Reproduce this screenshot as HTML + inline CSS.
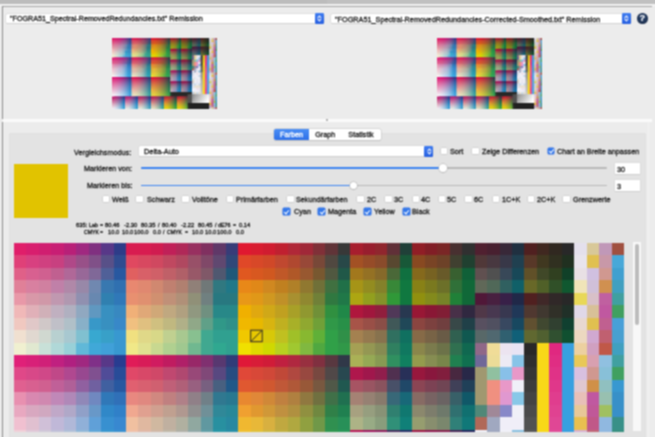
<!DOCTYPE html><html><head><meta charset="utf-8"><style>
*{margin:0;padding:0;box-sizing:border-box}
html,body{width:655px;height:437px;overflow:hidden;background:#ececec;-webkit-font-smoothing:antialiased;font-family:"Liberation Sans",sans-serif;color:#1c1c1c}
.a{position:absolute}
.t{position:absolute;white-space:nowrap;font-size:7.25px;line-height:9px;-webkit-text-stroke:0.3px currentColor;will-change:transform}
.pop{position:absolute;background:#fff;border-radius:1.5px;box-shadow:0 0 0 0.5px #d4d4d4,0 0.5px 0.8px rgba(0,0,0,.12)}
.step{position:absolute;background:linear-gradient(#3f7cf0,#2860e0);border-radius:1.2px}
.step:before,.step:after{content:"";position:absolute;left:50%;width:1.8px;height:1.8px;border-left:0.9px solid #fff;border-top:0.9px solid #fff;margin-left:-1.1px}
.step:before{top:3.4px;transform:rotate(45deg)}
.step:after{bottom:3.4px;transform:rotate(-135deg)}
.cb{position:absolute;width:6.6px;height:6.6px;background:#fff;border-radius:1px;box-shadow:0 0 0 0.5px #c4c4c4,0 0.3px 0.6px rgba(0,0,0,.12)}
.cb.on{background:#3478ea;box-shadow:0 0 0 0.5px #2c6ae0}
.cb.on:after{content:"";position:absolute;left:2.3px;top:0.6px;width:2px;height:4px;border-right:1.2px solid #fff;border-bottom:1.2px solid #fff;transform:rotate(40deg)}
.grid{position:absolute;display:grid}
.grid i{display:block}
</style></head><body><svg width="0" height="0" style="position:absolute"><filter id="bl" x="0" y="0" width="655" height="437" filterUnits="userSpaceOnUse" color-interpolation-filters="sRGB"><feConvolveMatrix order="3" kernelMatrix="1 2 1 2 4 2 1 2 1" divisor="16" edgeMode="duplicate" preserveAlpha="true"/></filter></svg><div id="w" style="position:absolute;left:0;top:0;width:655px;height:437px;overflow:hidden;background:#ececec;filter:url(#bl)">
<div class="a" style="left:0;top:0;width:655px;height:4px;background:#bcbcbc"></div><div class="a" style="left:327px;top:0;width:328px;height:4px;background:#c0c0c0"></div><div class="a" style="left:0;top:4px;width:655px;height:2.2px;background:#f2f2f2"></div><div class="a" style="left:2px;top:6.2px;width:650px;height:1.2px;background:#a2a2a2"></div><div class="a" style="left:1.5px;top:6px;width:1px;height:113px;background:#8a8a8a"></div><div class="a" style="left:1.5px;top:122px;width:1px;height:315px;background:#8a8a8a"></div><div class="a" style="left:648px;top:122px;width:1px;height:315px;background:#f2f2f2"></div><div class="pop" style="left:6px;top:13.5px;width:318px;height:9.2px"></div><div class="step" style="left:315px;top:12.5px;width:9px;height:11.5px"></div><div class="t" style="left:10px;top:14.7px;font-size:7.18px">"FOGRA51_Spectral-RemovedRedundancies.txt" Remission</div><div class="pop" style="left:330.5px;top:13.5px;width:300px;height:9.2px"></div><div class="step" style="left:621.5px;top:12.5px;width:9px;height:11.5px"></div><div class="t" style="left:334.5px;top:14.7px;font-size:7.28px">"FOGRA51_Spectral-RemovedRedundancies-Corrected-Smoothed.txt" Remission</div><div class="a" style="left:637.2px;top:13px;width:10.6px;height:10.6px;border-radius:50%;background:radial-gradient(circle at 50% 40%,#2c4670,#15253f)"></div><div class="t" style="left:637.2px;top:13.2px;width:10.6px;text-align:center;color:#fff;font-weight:bold;font-size:9px;line-height:10.8px;-webkit-text-stroke:0.2px #fff">?</div><svg class="a" style="left:111.6px;top:37.8px" width="105.84" height="71.50" viewBox="0 0 49 33" preserveAspectRatio="none"><g id="th"><rect x="0" y="0" width="2" height="2" fill="#e01e6a"/><rect x="1" y="0" width="2" height="2" fill="#d81e6e"/><rect x="2" y="0" width="2" height="2" fill="#d01e70"/><rect x="3" y="0" width="2" height="2" fill="#c81e74"/><rect x="4" y="0" width="2" height="2" fill="#b82078"/><rect x="5" y="0" width="2" height="2" fill="#a02880"/><rect x="6" y="0" width="2" height="2" fill="#803080"/><rect x="7" y="0" width="2" height="2" fill="#583888"/><rect x="8" y="0" width="2" height="2" fill="#2e3c88"/><rect x="9" y="0" width="2" height="2" fill="#d81c50"/><rect x="10" y="0" width="2" height="2" fill="#d81c50"/><rect x="11" y="0" width="2" height="2" fill="#d01c50"/><rect x="12" y="0" width="2" height="2" fill="#c02058"/><rect x="13" y="0" width="2" height="2" fill="#b02858"/><rect x="14" y="0" width="2" height="2" fill="#983060"/><rect x="15" y="0" width="2" height="2" fill="#803060"/><rect x="16" y="0" width="2" height="2" fill="#603868"/><rect x="17" y="0" width="2" height="2" fill="#383c78"/><rect x="18" y="0" width="2" height="2" fill="#e01830"/><rect x="19" y="0" width="2" height="2" fill="#d81c30"/><rect x="20" y="0" width="2" height="2" fill="#d01c30"/><rect x="21" y="0" width="2" height="2" fill="#c02030"/><rect x="22" y="0" width="2" height="2" fill="#b02838"/><rect x="23" y="0" width="2" height="2" fill="#a02838"/><rect x="24" y="0" width="2" height="2" fill="#803038"/><rect x="25" y="0" width="2" height="2" fill="#603438"/><rect x="26" y="0" width="2" height="2" fill="#383838"/><rect x="27" y="0" width="2" height="2" fill="#a71e2e"/><rect x="28" y="0" width="2" height="2" fill="#981e2e"/><rect x="29" y="0" width="2" height="2" fill="#90262e"/><rect x="30" y="0" width="2" height="2" fill="#603038"/><rect x="31" y="0" width="2" height="2" fill="#204038"/><rect x="32" y="0" width="2" height="2" fill="#901e26"/><rect x="33" y="0" width="2" height="2" fill="#811e26"/><rect x="34" y="0" width="2" height="2" fill="#7a2626"/><rect x="35" y="0" width="2" height="2" fill="#483030"/><rect x="36" y="0" width="2" height="2" fill="#303030"/><rect x="37" y="0" width="2" height="2" fill="#502030"/><rect x="38" y="0" width="2" height="2" fill="#482030"/><rect x="39" y="0" width="2" height="2" fill="#382838"/><rect x="40" y="0" width="2" height="2" fill="#203040"/><rect x="41" y="0" width="2" height="2" fill="#502020"/><rect x="42" y="0" width="2" height="2" fill="#402820"/><rect x="43" y="0" width="2" height="2" fill="#302820"/><rect x="44" y="0" width="2" height="2" fill="#282828"/><rect x="45" y="0" width="2" height="2" fill="#e4e0ec"/><rect x="46" y="0" width="2" height="2" fill="#d8c898"/><rect x="47" y="0" width="2" height="2" fill="#c098b8"/><rect x="48" y="0" width="2" height="2" fill="#a05040"/><rect x="0" y="1" width="2" height="2" fill="#e04078"/><rect x="1" y="1" width="2" height="2" fill="#d84080"/><rect x="2" y="1" width="2" height="2" fill="#d04080"/><rect x="3" y="1" width="2" height="2" fill="#c84080"/><rect x="4" y="1" width="2" height="2" fill="#b04888"/><rect x="5" y="1" width="2" height="2" fill="#985088"/><rect x="6" y="1" width="2" height="2" fill="#805088"/><rect x="7" y="1" width="2" height="2" fill="#585088"/><rect x="8" y="1" width="2" height="2" fill="#304c90"/><rect x="9" y="1" width="2" height="2" fill="#e04860"/><rect x="10" y="1" width="2" height="2" fill="#d84860"/><rect x="11" y="1" width="2" height="2" fill="#d04860"/><rect x="12" y="1" width="2" height="2" fill="#c04860"/><rect x="13" y="1" width="2" height="2" fill="#b04860"/><rect x="14" y="1" width="2" height="2" fill="#985068"/><rect x="15" y="1" width="2" height="2" fill="#804868"/><rect x="16" y="1" width="2" height="2" fill="#604870"/><rect x="17" y="1" width="2" height="2" fill="#304878"/><rect x="18" y="1" width="2" height="2" fill="#e04828"/><rect x="19" y="1" width="2" height="2" fill="#d84828"/><rect x="20" y="1" width="2" height="2" fill="#d04828"/><rect x="21" y="1" width="2" height="2" fill="#c04830"/><rect x="22" y="1" width="2" height="2" fill="#b04830"/><rect x="23" y="1" width="2" height="2" fill="#984838"/><rect x="24" y="1" width="2" height="2" fill="#784838"/><rect x="25" y="1" width="2" height="2" fill="#504840"/><rect x="26" y="1" width="2" height="2" fill="#284848"/><rect x="27" y="1" width="2" height="2" fill="#a35124"/><rect x="28" y="1" width="2" height="2" fill="#964c28"/><rect x="29" y="1" width="2" height="2" fill="#8a4b2b"/><rect x="30" y="1" width="2" height="2" fill="#584830"/><rect x="31" y="1" width="2" height="2" fill="#185838"/><rect x="32" y="1" width="2" height="2" fill="#884921"/><rect x="33" y="1" width="2" height="2" fill="#794425"/><rect x="34" y="1" width="2" height="2" fill="#6d4228"/><rect x="35" y="1" width="2" height="2" fill="#404030"/><rect x="36" y="1" width="2" height="2" fill="#204030"/><rect x="37" y="1" width="2" height="2" fill="#503838"/><rect x="38" y="1" width="2" height="2" fill="#483840"/><rect x="39" y="1" width="2" height="2" fill="#383848"/><rect x="40" y="1" width="2" height="2" fill="#204050"/><rect x="41" y="1" width="2" height="2" fill="#583828"/><rect x="42" y="1" width="2" height="2" fill="#403820"/><rect x="43" y="1" width="2" height="2" fill="#303020"/><rect x="44" y="1" width="2" height="2" fill="#203020"/><rect x="45" y="1" width="2" height="2" fill="#e8e4ec"/><rect x="46" y="1" width="2" height="2" fill="#e0c050"/><rect x="47" y="1" width="2" height="2" fill="#c898a8"/><rect x="48" y="1" width="2" height="2" fill="#48a8d8"/><rect x="0" y="2" width="2" height="2" fill="#e06088"/><rect x="1" y="2" width="2" height="2" fill="#d86090"/><rect x="2" y="2" width="2" height="2" fill="#d06090"/><rect x="3" y="2" width="2" height="2" fill="#c06090"/><rect x="4" y="2" width="2" height="2" fill="#b06898"/><rect x="5" y="2" width="2" height="2" fill="#986898"/><rect x="6" y="2" width="2" height="2" fill="#806898"/><rect x="7" y="2" width="2" height="2" fill="#506098"/><rect x="8" y="2" width="2" height="2" fill="#2858a0"/><rect x="9" y="2" width="2" height="2" fill="#e06060"/><rect x="10" y="2" width="2" height="2" fill="#d86068"/><rect x="11" y="2" width="2" height="2" fill="#d06068"/><rect x="12" y="2" width="2" height="2" fill="#c06068"/><rect x="13" y="2" width="2" height="2" fill="#b06068"/><rect x="14" y="2" width="2" height="2" fill="#985868"/><rect x="15" y="2" width="2" height="2" fill="#805868"/><rect x="16" y="2" width="2" height="2" fill="#505870"/><rect x="17" y="2" width="2" height="2" fill="#205878"/><rect x="18" y="2" width="2" height="2" fill="#e05820"/><rect x="19" y="2" width="2" height="2" fill="#d85820"/><rect x="20" y="2" width="2" height="2" fill="#d05820"/><rect x="21" y="2" width="2" height="2" fill="#c05828"/><rect x="22" y="2" width="2" height="2" fill="#b05828"/><rect x="23" y="2" width="2" height="2" fill="#985830"/><rect x="24" y="2" width="2" height="2" fill="#785830"/><rect x="25" y="2" width="2" height="2" fill="#505840"/><rect x="26" y="2" width="2" height="2" fill="#205848"/><rect x="27" y="2" width="2" height="2" fill="#a2781d"/><rect x="28" y="2" width="2" height="2" fill="#947124"/><rect x="29" y="2" width="2" height="2" fill="#86692a"/><rect x="30" y="2" width="2" height="2" fill="#4a6838"/><rect x="31" y="2" width="2" height="2" fill="#107040"/><rect x="32" y="2" width="2" height="2" fill="#85691c"/><rect x="33" y="2" width="2" height="2" fill="#776222"/><rect x="34" y="2" width="2" height="2" fill="#685a29"/><rect x="35" y="2" width="2" height="2" fill="#386030"/><rect x="36" y="2" width="2" height="2" fill="#106038"/><rect x="37" y="2" width="2" height="2" fill="#605050"/><rect x="38" y="2" width="2" height="2" fill="#505050"/><rect x="39" y="2" width="2" height="2" fill="#384858"/><rect x="40" y="2" width="2" height="2" fill="#184858"/><rect x="41" y="2" width="2" height="2" fill="#605028"/><rect x="42" y="2" width="2" height="2" fill="#404828"/><rect x="43" y="2" width="2" height="2" fill="#304020"/><rect x="44" y="2" width="2" height="2" fill="#104028"/><rect x="45" y="2" width="2" height="2" fill="#e8e0e4"/><rect x="46" y="2" width="2" height="2" fill="#d0c0e0"/><rect x="47" y="2" width="2" height="2" fill="#d09890"/><rect x="48" y="2" width="2" height="2" fill="#40a0d0"/><rect x="0" y="3" width="2" height="2" fill="#e08098"/><rect x="1" y="3" width="2" height="2" fill="#d880a0"/><rect x="2" y="3" width="2" height="2" fill="#d080a0"/><rect x="3" y="3" width="2" height="2" fill="#c080a8"/><rect x="4" y="3" width="2" height="2" fill="#b088a8"/><rect x="5" y="3" width="2" height="2" fill="#9888a8"/><rect x="6" y="3" width="2" height="2" fill="#7088b0"/><rect x="7" y="3" width="2" height="2" fill="#3878b0"/><rect x="8" y="3" width="2" height="2" fill="#3070b0"/><rect x="9" y="3" width="2" height="2" fill="#e88870"/><rect x="10" y="3" width="2" height="2" fill="#e08870"/><rect x="11" y="3" width="2" height="2" fill="#d08870"/><rect x="12" y="3" width="2" height="2" fill="#c08070"/><rect x="13" y="3" width="2" height="2" fill="#b08070"/><rect x="14" y="3" width="2" height="2" fill="#908078"/><rect x="15" y="3" width="2" height="2" fill="#707878"/><rect x="16" y="3" width="2" height="2" fill="#307880"/><rect x="17" y="3" width="2" height="2" fill="#207888"/><rect x="18" y="3" width="2" height="2" fill="#e88818"/><rect x="19" y="3" width="2" height="2" fill="#e08818"/><rect x="20" y="3" width="2" height="2" fill="#d08820"/><rect x="21" y="3" width="2" height="2" fill="#c08020"/><rect x="22" y="3" width="2" height="2" fill="#b08028"/><rect x="23" y="3" width="2" height="2" fill="#907830"/><rect x="24" y="3" width="2" height="2" fill="#707038"/><rect x="25" y="3" width="2" height="2" fill="#407040"/><rect x="26" y="3" width="2" height="2" fill="#207048"/><rect x="27" y="3" width="2" height="2" fill="#a69417"/><rect x="28" y="3" width="2" height="2" fill="#938c20"/><rect x="29" y="3" width="2" height="2" fill="#84812a"/><rect x="30" y="3" width="2" height="2" fill="#388838"/><rect x="31" y="3" width="2" height="2" fill="#107840"/><rect x="32" y="3" width="2" height="2" fill="#888116"/><rect x="33" y="3" width="2" height="2" fill="#7a791f"/><rect x="34" y="3" width="2" height="2" fill="#6c7029"/><rect x="35" y="3" width="2" height="2" fill="#307038"/><rect x="36" y="3" width="2" height="2" fill="#106838"/><rect x="37" y="3" width="2" height="2" fill="#606858"/><rect x="38" y="3" width="2" height="2" fill="#506858"/><rect x="39" y="3" width="2" height="2" fill="#306060"/><rect x="40" y="3" width="2" height="2" fill="#106068"/><rect x="41" y="3" width="2" height="2" fill="#686828"/><rect x="42" y="3" width="2" height="2" fill="#506028"/><rect x="43" y="3" width="2" height="2" fill="#305028"/><rect x="44" y="3" width="2" height="2" fill="#105830"/><rect x="45" y="3" width="2" height="2" fill="#f0e4b8"/><rect x="46" y="3" width="2" height="2" fill="#d0c0d8"/><rect x="47" y="3" width="2" height="2" fill="#d09050"/><rect x="48" y="3" width="2" height="2" fill="#40a0c0"/><rect x="0" y="4" width="2" height="2" fill="#e898a8"/><rect x="1" y="4" width="2" height="2" fill="#d898a8"/><rect x="2" y="4" width="2" height="2" fill="#d098a8"/><rect x="3" y="4" width="2" height="2" fill="#c098b0"/><rect x="4" y="4" width="2" height="2" fill="#b098b0"/><rect x="5" y="4" width="2" height="2" fill="#9090b0"/><rect x="6" y="4" width="2" height="2" fill="#6888b0"/><rect x="7" y="4" width="2" height="2" fill="#3080b0"/><rect x="8" y="4" width="2" height="2" fill="#3078b8"/><rect x="9" y="4" width="2" height="2" fill="#e89070"/><rect x="10" y="4" width="2" height="2" fill="#e09070"/><rect x="11" y="4" width="2" height="2" fill="#d09070"/><rect x="12" y="4" width="2" height="2" fill="#c09078"/><rect x="13" y="4" width="2" height="2" fill="#b09078"/><rect x="14" y="4" width="2" height="2" fill="#909078"/><rect x="15" y="4" width="2" height="2" fill="#708080"/><rect x="16" y="4" width="2" height="2" fill="#287880"/><rect x="17" y="4" width="2" height="2" fill="#287880"/><rect x="18" y="4" width="2" height="2" fill="#e89818"/><rect x="19" y="4" width="2" height="2" fill="#e09818"/><rect x="20" y="4" width="2" height="2" fill="#d09820"/><rect x="21" y="4" width="2" height="2" fill="#c09028"/><rect x="22" y="4" width="2" height="2" fill="#a89030"/><rect x="23" y="4" width="2" height="2" fill="#908830"/><rect x="24" y="4" width="2" height="2" fill="#708038"/><rect x="25" y="4" width="2" height="2" fill="#307840"/><rect x="26" y="4" width="2" height="2" fill="#207848"/><rect x="27" y="4" width="2" height="2" fill="#ada612"/><rect x="28" y="4" width="2" height="2" fill="#929f1e"/><rect x="29" y="4" width="2" height="2" fill="#84912a"/><rect x="30" y="4" width="2" height="2" fill="#309838"/><rect x="31" y="4" width="2" height="2" fill="#107840"/><rect x="32" y="4" width="2" height="2" fill="#90900f"/><rect x="33" y="4" width="2" height="2" fill="#838a1c"/><rect x="34" y="4" width="2" height="2" fill="#768328"/><rect x="35" y="4" width="2" height="2" fill="#208038"/><rect x="36" y="4" width="2" height="2" fill="#106838"/><rect x="37" y="4" width="2" height="2" fill="#501838"/><rect x="38" y="4" width="2" height="2" fill="#482040"/><rect x="39" y="4" width="2" height="2" fill="#382048"/><rect x="40" y="4" width="2" height="2" fill="#202848"/><rect x="41" y="4" width="2" height="2" fill="#502020"/><rect x="42" y="4" width="2" height="2" fill="#402828"/><rect x="43" y="4" width="2" height="2" fill="#302828"/><rect x="44" y="4" width="2" height="2" fill="#282828"/><rect x="45" y="4" width="2" height="2" fill="#e8d858"/><rect x="46" y="4" width="2" height="2" fill="#d8c0c8"/><rect x="47" y="4" width="2" height="2" fill="#c060a0"/><rect x="48" y="4" width="2" height="2" fill="#40a0a0"/><rect x="0" y="5" width="2" height="2" fill="#f0b8b8"/><rect x="1" y="5" width="2" height="2" fill="#e0b0b8"/><rect x="2" y="5" width="2" height="2" fill="#d0b0b8"/><rect x="3" y="5" width="2" height="2" fill="#c0b0c0"/><rect x="4" y="5" width="2" height="2" fill="#b0b0c0"/><rect x="5" y="5" width="2" height="2" fill="#90a8c0"/><rect x="6" y="5" width="2" height="2" fill="#6098c0"/><rect x="7" y="5" width="2" height="2" fill="#3890c0"/><rect x="8" y="5" width="2" height="2" fill="#3888c0"/><rect x="9" y="5" width="2" height="2" fill="#f0b078"/><rect x="10" y="5" width="2" height="2" fill="#e0a878"/><rect x="11" y="5" width="2" height="2" fill="#d0a878"/><rect x="12" y="5" width="2" height="2" fill="#c0a880"/><rect x="13" y="5" width="2" height="2" fill="#b0a080"/><rect x="14" y="5" width="2" height="2" fill="#909880"/><rect x="15" y="5" width="2" height="2" fill="#709080"/><rect x="16" y="5" width="2" height="2" fill="#288888"/><rect x="17" y="5" width="2" height="2" fill="#288888"/><rect x="18" y="5" width="2" height="2" fill="#f0b000"/><rect x="19" y="5" width="2" height="2" fill="#e0a810"/><rect x="20" y="5" width="2" height="2" fill="#d0a818"/><rect x="21" y="5" width="2" height="2" fill="#c0a020"/><rect x="22" y="5" width="2" height="2" fill="#a8a028"/><rect x="23" y="5" width="2" height="2" fill="#909830"/><rect x="24" y="5" width="2" height="2" fill="#709038"/><rect x="25" y="5" width="2" height="2" fill="#309040"/><rect x="26" y="5" width="2" height="2" fill="#208848"/><rect x="27" y="5" width="2" height="2" fill="#af173d"/><rect x="28" y="5" width="2" height="2" fill="#a0173d"/><rect x="29" y="5" width="2" height="2" fill="#901e3d"/><rect x="30" y="5" width="2" height="2" fill="#503858"/><rect x="31" y="5" width="2" height="2" fill="#283850"/><rect x="32" y="5" width="2" height="2" fill="#981735"/><rect x="33" y="5" width="2" height="2" fill="#891735"/><rect x="34" y="5" width="2" height="2" fill="#811e35"/><rect x="35" y="5" width="2" height="2" fill="#483048"/><rect x="36" y="5" width="2" height="2" fill="#302840"/><rect x="37" y="5" width="2" height="2" fill="#503848"/><rect x="38" y="5" width="2" height="2" fill="#483850"/><rect x="39" y="5" width="2" height="2" fill="#383850"/><rect x="40" y="5" width="2" height="2" fill="#203858"/><rect x="41" y="5" width="2" height="2" fill="#503830"/><rect x="42" y="5" width="2" height="2" fill="#403830"/><rect x="43" y="5" width="2" height="2" fill="#303028"/><rect x="44" y="5" width="2" height="2" fill="#203028"/><rect x="45" y="5" width="2" height="2" fill="#e0d8e8"/><rect x="46" y="5" width="2" height="2" fill="#d8c098"/><rect x="47" y="5" width="2" height="2" fill="#c058a0"/><rect x="48" y="5" width="2" height="2" fill="#40a060"/><rect x="0" y="6" width="2" height="2" fill="#f0c8c0"/><rect x="1" y="6" width="2" height="2" fill="#e0c8c8"/><rect x="2" y="6" width="2" height="2" fill="#d0c8c8"/><rect x="3" y="6" width="2" height="2" fill="#c0c0c8"/><rect x="4" y="6" width="2" height="2" fill="#b0c0c8"/><rect x="5" y="6" width="2" height="2" fill="#88b0c8"/><rect x="6" y="6" width="2" height="2" fill="#3898c8"/><rect x="7" y="6" width="2" height="2" fill="#3890c0"/><rect x="8" y="6" width="2" height="2" fill="#3888c8"/><rect x="9" y="6" width="2" height="2" fill="#f0c080"/><rect x="10" y="6" width="2" height="2" fill="#e0c080"/><rect x="11" y="6" width="2" height="2" fill="#d0c080"/><rect x="12" y="6" width="2" height="2" fill="#c0b880"/><rect x="13" y="6" width="2" height="2" fill="#b0b088"/><rect x="14" y="6" width="2" height="2" fill="#90a888"/><rect x="15" y="6" width="2" height="2" fill="#60a088"/><rect x="16" y="6" width="2" height="2" fill="#309888"/><rect x="17" y="6" width="2" height="2" fill="#309088"/><rect x="18" y="6" width="2" height="2" fill="#f0b800"/><rect x="19" y="6" width="2" height="2" fill="#e8b800"/><rect x="20" y="6" width="2" height="2" fill="#d8b410"/><rect x="21" y="6" width="2" height="2" fill="#c0b020"/><rect x="22" y="6" width="2" height="2" fill="#a8b028"/><rect x="23" y="6" width="2" height="2" fill="#90a830"/><rect x="24" y="6" width="2" height="2" fill="#70a038"/><rect x="25" y="6" width="2" height="2" fill="#309848"/><rect x="26" y="6" width="2" height="2" fill="#289048"/><rect x="27" y="6" width="2" height="2" fill="#a75448"/><rect x="28" y="6" width="2" height="2" fill="#994f47"/><rect x="29" y="6" width="2" height="2" fill="#8a4e47"/><rect x="30" y="6" width="2" height="2" fill="#405858"/><rect x="31" y="6" width="2" height="2" fill="#204858"/><rect x="32" y="6" width="2" height="2" fill="#8b4540"/><rect x="33" y="6" width="2" height="2" fill="#7c413f"/><rect x="34" y="6" width="2" height="2" fill="#703f3f"/><rect x="35" y="6" width="2" height="2" fill="#384848"/><rect x="36" y="6" width="2" height="2" fill="#204048"/><rect x="37" y="6" width="2" height="2" fill="#585060"/><rect x="38" y="6" width="2" height="2" fill="#505060"/><rect x="39" y="6" width="2" height="2" fill="#384860"/><rect x="40" y="6" width="2" height="2" fill="#184860"/><rect x="41" y="6" width="2" height="2" fill="#605030"/><rect x="42" y="6" width="2" height="2" fill="#404830"/><rect x="43" y="6" width="2" height="2" fill="#304030"/><rect x="44" y="6" width="2" height="2" fill="#104030"/><rect x="45" y="6" width="2" height="2" fill="#e8d8d0"/><rect x="46" y="6" width="2" height="2" fill="#e0c050"/><rect x="47" y="6" width="2" height="2" fill="#c06090"/><rect x="48" y="6" width="2" height="2" fill="#48a0d8"/><rect x="0" y="7" width="2" height="2" fill="#f0e0d0"/><rect x="1" y="7" width="2" height="2" fill="#e0d8d0"/><rect x="2" y="7" width="2" height="2" fill="#d0d8d0"/><rect x="3" y="7" width="2" height="2" fill="#b8d0d0"/><rect x="4" y="7" width="2" height="2" fill="#a8c8d0"/><rect x="5" y="7" width="2" height="2" fill="#80c0d0"/><rect x="6" y="7" width="2" height="2" fill="#38a8d0"/><rect x="7" y="7" width="2" height="2" fill="#38a0c8"/><rect x="8" y="7" width="2" height="2" fill="#3898d0"/><rect x="9" y="7" width="2" height="2" fill="#f0e080"/><rect x="10" y="7" width="2" height="2" fill="#e0d888"/><rect x="11" y="7" width="2" height="2" fill="#d8d888"/><rect x="12" y="7" width="2" height="2" fill="#c0d090"/><rect x="13" y="7" width="2" height="2" fill="#a8c890"/><rect x="14" y="7" width="2" height="2" fill="#88c090"/><rect x="15" y="7" width="2" height="2" fill="#40a890"/><rect x="16" y="7" width="2" height="2" fill="#30a090"/><rect x="17" y="7" width="2" height="2" fill="#30a090"/><rect x="18" y="7" width="2" height="2" fill="#f0c800"/><rect x="19" y="7" width="2" height="2" fill="#e8c800"/><rect x="20" y="7" width="2" height="2" fill="#d8c808"/><rect x="21" y="7" width="2" height="2" fill="#c0c020"/><rect x="22" y="7" width="2" height="2" fill="#a0c028"/><rect x="23" y="7" width="2" height="2" fill="#88b830"/><rect x="24" y="7" width="2" height="2" fill="#60b038"/><rect x="25" y="7" width="2" height="2" fill="#30a048"/><rect x="26" y="7" width="2" height="2" fill="#309048"/><rect x="27" y="7" width="2" height="2" fill="#a48150"/><rect x="28" y="7" width="2" height="2" fill="#95794f"/><rect x="29" y="7" width="2" height="2" fill="#87724e"/><rect x="30" y="7" width="2" height="2" fill="#307060"/><rect x="31" y="7" width="2" height="2" fill="#107060"/><rect x="32" y="7" width="2" height="2" fill="#866a47"/><rect x="33" y="7" width="2" height="2" fill="#786346"/><rect x="34" y="7" width="2" height="2" fill="#695b46"/><rect x="35" y="7" width="2" height="2" fill="#306050"/><rect x="36" y="7" width="2" height="2" fill="#105850"/><rect x="37" y="7" width="2" height="2" fill="#586868"/><rect x="38" y="7" width="2" height="2" fill="#506870"/><rect x="39" y="7" width="2" height="2" fill="#306070"/><rect x="40" y="7" width="2" height="2" fill="#106078"/><rect x="41" y="7" width="2" height="2" fill="#606830"/><rect x="42" y="7" width="2" height="2" fill="#506030"/><rect x="43" y="7" width="2" height="2" fill="#305030"/><rect x="44" y="7" width="2" height="2" fill="#105030"/><rect x="45" y="7" width="2" height="2" fill="#ecd8c0"/><rect x="46" y="7" width="2" height="2" fill="#d0a8d0"/><rect x="47" y="7" width="2" height="2" fill="#c06070"/><rect x="48" y="7" width="2" height="2" fill="#48a0d0"/><rect x="0" y="8" width="2" height="2" fill="#f0f0d0"/><rect x="1" y="8" width="2" height="2" fill="#e0e8d0"/><rect x="2" y="8" width="2" height="2" fill="#c8e0d8"/><rect x="3" y="8" width="2" height="2" fill="#b0d8d8"/><rect x="4" y="8" width="2" height="2" fill="#98d0d8"/><rect x="5" y="8" width="2" height="2" fill="#60b8d8"/><rect x="6" y="8" width="2" height="2" fill="#40a8d8"/><rect x="7" y="8" width="2" height="2" fill="#40a0d8"/><rect x="8" y="8" width="2" height="2" fill="#3898d0"/><rect x="9" y="8" width="2" height="2" fill="#f0e888"/><rect x="10" y="8" width="2" height="2" fill="#e0e090"/><rect x="11" y="8" width="2" height="2" fill="#c8d890"/><rect x="12" y="8" width="2" height="2" fill="#b0d090"/><rect x="13" y="8" width="2" height="2" fill="#a0c890"/><rect x="14" y="8" width="2" height="2" fill="#70b890"/><rect x="15" y="8" width="2" height="2" fill="#40a890"/><rect x="16" y="8" width="2" height="2" fill="#30a890"/><rect x="17" y="8" width="2" height="2" fill="#30a090"/><rect x="18" y="8" width="2" height="2" fill="#f0e000"/><rect x="19" y="8" width="2" height="2" fill="#e0d800"/><rect x="20" y="8" width="2" height="2" fill="#d0d800"/><rect x="21" y="8" width="2" height="2" fill="#b8d020"/><rect x="22" y="8" width="2" height="2" fill="#a0c830"/><rect x="23" y="8" width="2" height="2" fill="#80b840"/><rect x="24" y="8" width="2" height="2" fill="#50a840"/><rect x="25" y="8" width="2" height="2" fill="#30a048"/><rect x="26" y="8" width="2" height="2" fill="#309848"/><rect x="27" y="8" width="2" height="2" fill="#a5a054"/><rect x="28" y="8" width="2" height="2" fill="#949753"/><rect x="29" y="8" width="2" height="2" fill="#868b52"/><rect x="30" y="8" width="2" height="2" fill="#308060"/><rect x="31" y="8" width="2" height="2" fill="#107860"/><rect x="32" y="8" width="2" height="2" fill="#8a864b"/><rect x="33" y="8" width="2" height="2" fill="#7b7b4d"/><rect x="34" y="8" width="2" height="2" fill="#6c7249"/><rect x="35" y="8" width="2" height="2" fill="#307050"/><rect x="36" y="8" width="2" height="2" fill="#106850"/><rect x="37" y="8" width="2" height="2" fill="#906888"/><rect x="38" y="8" width="2" height="2" fill="#f0dc98"/><rect x="39" y="8" width="2" height="2" fill="#ece4f0"/><rect x="40" y="8" width="2" height="2" fill="#e8e4f4"/><rect x="41" y="8" width="2" height="2" fill="#282828"/><rect x="42" y="8" width="2" height="2" fill="#f8d818"/><rect x="43" y="8" width="2" height="2" fill="#e02880"/><rect x="44" y="8" width="2" height="2" fill="#38a0e0"/><rect x="45" y="8" width="2" height="2" fill="#ecd0a0"/><rect x="46" y="8" width="2" height="2" fill="#d0a0c0"/><rect x="47" y="8" width="2" height="2" fill="#c05848"/><rect x="48" y="8" width="2" height="2" fill="#40a0c0"/><rect x="0" y="9" width="2" height="2" fill="#e02078"/><rect x="1" y="9" width="2" height="2" fill="#d82078"/><rect x="2" y="9" width="2" height="2" fill="#d02078"/><rect x="3" y="9" width="2" height="2" fill="#c02080"/><rect x="4" y="9" width="2" height="2" fill="#b02080"/><rect x="5" y="9" width="2" height="2" fill="#a02880"/><rect x="6" y="9" width="2" height="2" fill="#803088"/><rect x="7" y="9" width="2" height="2" fill="#583888"/><rect x="8" y="9" width="2" height="2" fill="#283c90"/><rect x="9" y="9" width="2" height="2" fill="#e01c58"/><rect x="10" y="9" width="2" height="2" fill="#d81c58"/><rect x="11" y="9" width="2" height="2" fill="#d01c60"/><rect x="12" y="9" width="2" height="2" fill="#c01c60"/><rect x="13" y="9" width="2" height="2" fill="#b02068"/><rect x="14" y="9" width="2" height="2" fill="#982868"/><rect x="15" y="9" width="2" height="2" fill="#803070"/><rect x="16" y="9" width="2" height="2" fill="#583870"/><rect x="17" y="9" width="2" height="2" fill="#303c78"/><rect x="18" y="9" width="2" height="2" fill="#e01838"/><rect x="19" y="9" width="2" height="2" fill="#d81c38"/><rect x="20" y="9" width="2" height="2" fill="#d01c38"/><rect x="21" y="9" width="2" height="2" fill="#c02040"/><rect x="22" y="9" width="2" height="2" fill="#b02840"/><rect x="23" y="9" width="2" height="2" fill="#983040"/><rect x="24" y="9" width="2" height="2" fill="#803040"/><rect x="25" y="9" width="2" height="2" fill="#583840"/><rect x="26" y="9" width="2" height="2" fill="#303848"/><rect x="27" y="9" width="2" height="2" fill="#aab156"/><rect x="28" y="9" width="2" height="2" fill="#95a955"/><rect x="29" y="9" width="2" height="2" fill="#879a53"/><rect x="30" y="9" width="2" height="2" fill="#309060"/><rect x="31" y="9" width="2" height="2" fill="#108060"/><rect x="32" y="9" width="2" height="2" fill="#949b4d"/><rect x="33" y="9" width="2" height="2" fill="#868d52"/><rect x="34" y="9" width="2" height="2" fill="#78854a"/><rect x="35" y="9" width="2" height="2" fill="#208050"/><rect x="36" y="9" width="2" height="2" fill="#107050"/><rect x="37" y="9" width="2" height="2" fill="#706898"/><rect x="38" y="9" width="2" height="2" fill="#ecdc98"/><rect x="39" y="9" width="2" height="2" fill="#eceaf4"/><rect x="40" y="9" width="2" height="2" fill="#88c4e8"/><rect x="41" y="9" width="2" height="2" fill="#2f2f2f"/><rect x="42" y="9" width="2" height="2" fill="#f8d818"/><rect x="43" y="9" width="2" height="2" fill="#e02d83"/><rect x="44" y="9" width="2" height="2" fill="#38a0e0"/><rect x="45" y="9" width="2" height="2" fill="#e8c858"/><rect x="46" y="9" width="2" height="2" fill="#d8a0b0"/><rect x="47" y="9" width="2" height="2" fill="#90c0e0"/><rect x="48" y="9" width="2" height="2" fill="#40a0a0"/><rect x="0" y="10" width="2" height="2" fill="#e04888"/><rect x="1" y="10" width="2" height="2" fill="#d84888"/><rect x="2" y="10" width="2" height="2" fill="#d04888"/><rect x="3" y="10" width="2" height="2" fill="#c04888"/><rect x="4" y="10" width="2" height="2" fill="#b04890"/><rect x="5" y="10" width="2" height="2" fill="#984890"/><rect x="6" y="10" width="2" height="2" fill="#805090"/><rect x="7" y="10" width="2" height="2" fill="#504c98"/><rect x="8" y="10" width="2" height="2" fill="#284c98"/><rect x="9" y="10" width="2" height="2" fill="#e04868"/><rect x="10" y="10" width="2" height="2" fill="#d84868"/><rect x="11" y="10" width="2" height="2" fill="#d04868"/><rect x="12" y="10" width="2" height="2" fill="#c04870"/><rect x="13" y="10" width="2" height="2" fill="#b04870"/><rect x="14" y="10" width="2" height="2" fill="#984878"/><rect x="15" y="10" width="2" height="2" fill="#804878"/><rect x="16" y="10" width="2" height="2" fill="#584880"/><rect x="17" y="10" width="2" height="2" fill="#284c80"/><rect x="18" y="10" width="2" height="2" fill="#e04838"/><rect x="19" y="10" width="2" height="2" fill="#d84838"/><rect x="20" y="10" width="2" height="2" fill="#d04838"/><rect x="21" y="10" width="2" height="2" fill="#c04838"/><rect x="22" y="10" width="2" height="2" fill="#b04840"/><rect x="23" y="10" width="2" height="2" fill="#984840"/><rect x="24" y="10" width="2" height="2" fill="#784840"/><rect x="25" y="10" width="2" height="2" fill="#504848"/><rect x="26" y="10" width="2" height="2" fill="#284850"/><rect x="27" y="10" width="2" height="2" fill="#af174c"/><rect x="28" y="10" width="2" height="2" fill="#a0174c"/><rect x="29" y="10" width="2" height="2" fill="#901e4c"/><rect x="30" y="10" width="2" height="2" fill="#503050"/><rect x="31" y="10" width="2" height="2" fill="#283058"/><rect x="32" y="10" width="2" height="2" fill="#98173d"/><rect x="33" y="10" width="2" height="2" fill="#89173d"/><rect x="34" y="10" width="2" height="2" fill="#811e3d"/><rect x="35" y="10" width="2" height="2" fill="#482840"/><rect x="36" y="10" width="2" height="2" fill="#282848"/><rect x="37" y="10" width="2" height="2" fill="#a09870"/><rect x="38" y="10" width="2" height="2" fill="#90c0a0"/><rect x="39" y="10" width="2" height="2" fill="#88c0e8"/><rect x="40" y="10" width="2" height="2" fill="#e898c8"/><rect x="41" y="10" width="2" height="2" fill="#363636"/><rect x="42" y="10" width="2" height="2" fill="#f8d818"/><rect x="43" y="10" width="2" height="2" fill="#e03287"/><rect x="44" y="10" width="2" height="2" fill="#38a0e0"/><rect x="45" y="10" width="2" height="2" fill="#d8c0e0"/><rect x="46" y="10" width="2" height="2" fill="#d09890"/><rect x="47" y="10" width="2" height="2" fill="#88c0d8"/><rect x="48" y="10" width="2" height="2" fill="#40a060"/><rect x="0" y="11" width="2" height="2" fill="#e06090"/><rect x="1" y="11" width="2" height="2" fill="#d86090"/><rect x="2" y="11" width="2" height="2" fill="#d06090"/><rect x="3" y="11" width="2" height="2" fill="#c06098"/><rect x="4" y="11" width="2" height="2" fill="#b06098"/><rect x="5" y="11" width="2" height="2" fill="#9060a0"/><rect x="6" y="11" width="2" height="2" fill="#7060a0"/><rect x="7" y="11" width="2" height="2" fill="#4060a0"/><rect x="8" y="11" width="2" height="2" fill="#2858a0"/><rect x="9" y="11" width="2" height="2" fill="#e06070"/><rect x="10" y="11" width="2" height="2" fill="#d86070"/><rect x="11" y="11" width="2" height="2" fill="#d06070"/><rect x="12" y="11" width="2" height="2" fill="#c06078"/><rect x="13" y="11" width="2" height="2" fill="#b06078"/><rect x="14" y="11" width="2" height="2" fill="#986080"/><rect x="15" y="11" width="2" height="2" fill="#786080"/><rect x="16" y="11" width="2" height="2" fill="#486080"/><rect x="17" y="11" width="2" height="2" fill="#205888"/><rect x="18" y="11" width="2" height="2" fill="#e05830"/><rect x="19" y="11" width="2" height="2" fill="#d85830"/><rect x="20" y="11" width="2" height="2" fill="#d05830"/><rect x="21" y="11" width="2" height="2" fill="#c05838"/><rect x="22" y="11" width="2" height="2" fill="#b05838"/><rect x="23" y="11" width="2" height="2" fill="#985838"/><rect x="24" y="11" width="2" height="2" fill="#785840"/><rect x="25" y="11" width="2" height="2" fill="#505848"/><rect x="26" y="11" width="2" height="2" fill="#205850"/><rect x="27" y="11" width="2" height="2" fill="#a75463"/><rect x="28" y="11" width="2" height="2" fill="#995562"/><rect x="29" y="11" width="2" height="2" fill="#8a535e"/><rect x="30" y="11" width="2" height="2" fill="#485068"/><rect x="31" y="11" width="2" height="2" fill="#204868"/><rect x="32" y="11" width="2" height="2" fill="#8b4554"/><rect x="33" y="11" width="2" height="2" fill="#7c4254"/><rect x="34" y="11" width="2" height="2" fill="#704554"/><rect x="35" y="11" width="2" height="2" fill="#404058"/><rect x="36" y="11" width="2" height="2" fill="#204058"/><rect x="37" y="11" width="2" height="2" fill="#a09870"/><rect x="38" y="11" width="2" height="2" fill="#f09080"/><rect x="39" y="11" width="2" height="2" fill="#e898c8"/><rect x="40" y="11" width="2" height="2" fill="#f0f0f8"/><rect x="41" y="11" width="2" height="2" fill="#3d3d3d"/><rect x="42" y="11" width="2" height="2" fill="#f8d818"/><rect x="43" y="11" width="2" height="2" fill="#e0378a"/><rect x="44" y="11" width="2" height="2" fill="#38a0e0"/><rect x="45" y="11" width="2" height="2" fill="#e0c8d0"/><rect x="46" y="11" width="2" height="2" fill="#d09048"/><rect x="47" y="11" width="2" height="2" fill="#90c0c0"/><rect x="48" y="11" width="2" height="2" fill="#3898d0"/><rect x="0" y="12" width="2" height="2" fill="#e890b0"/><rect x="1" y="12" width="2" height="2" fill="#d888b0"/><rect x="2" y="12" width="2" height="2" fill="#d088b0"/><rect x="3" y="12" width="2" height="2" fill="#c088b8"/><rect x="4" y="12" width="2" height="2" fill="#b088b8"/><rect x="5" y="12" width="2" height="2" fill="#9088b8"/><rect x="6" y="12" width="2" height="2" fill="#7088c0"/><rect x="7" y="12" width="2" height="2" fill="#3078b8"/><rect x="8" y="12" width="2" height="2" fill="#3070b8"/><rect x="9" y="12" width="2" height="2" fill="#e88880"/><rect x="10" y="12" width="2" height="2" fill="#e08880"/><rect x="11" y="12" width="2" height="2" fill="#d08880"/><rect x="12" y="12" width="2" height="2" fill="#c08080"/><rect x="13" y="12" width="2" height="2" fill="#b08088"/><rect x="14" y="12" width="2" height="2" fill="#908088"/><rect x="15" y="12" width="2" height="2" fill="#708088"/><rect x="16" y="12" width="2" height="2" fill="#307890"/><rect x="17" y="12" width="2" height="2" fill="#287890"/><rect x="18" y="12" width="2" height="2" fill="#e88830"/><rect x="19" y="12" width="2" height="2" fill="#e08838"/><rect x="20" y="12" width="2" height="2" fill="#d08838"/><rect x="21" y="12" width="2" height="2" fill="#c08040"/><rect x="22" y="12" width="2" height="2" fill="#b08040"/><rect x="23" y="12" width="2" height="2" fill="#907840"/><rect x="24" y="12" width="2" height="2" fill="#707040"/><rect x="25" y="12" width="2" height="2" fill="#407048"/><rect x="26" y="12" width="2" height="2" fill="#207050"/><rect x="27" y="12" width="2" height="2" fill="#a58274"/><rect x="28" y="12" width="2" height="2" fill="#968173"/><rect x="29" y="12" width="2" height="2" fill="#887a6c"/><rect x="30" y="12" width="2" height="2" fill="#386878"/><rect x="31" y="12" width="2" height="2" fill="#186878"/><rect x="32" y="12" width="2" height="2" fill="#876b64"/><rect x="33" y="12" width="2" height="2" fill="#786363"/><rect x="34" y="12" width="2" height="2" fill="#6a6363"/><rect x="35" y="12" width="2" height="2" fill="#386068"/><rect x="36" y="12" width="2" height="2" fill="#105868"/><rect x="37" y="12" width="2" height="2" fill="#a09870"/><rect x="38" y="12" width="2" height="2" fill="#f09080"/><rect x="39" y="12" width="2" height="2" fill="#e098d0"/><rect x="40" y="12" width="2" height="2" fill="#88c8e8"/><rect x="41" y="12" width="2" height="2" fill="#444444"/><rect x="42" y="12" width="2" height="2" fill="#f8d818"/><rect x="43" y="12" width="2" height="2" fill="#e03d8e"/><rect x="44" y="12" width="2" height="2" fill="#38a0e0"/><rect x="45" y="12" width="2" height="2" fill="#e8c0b8"/><rect x="46" y="12" width="2" height="2" fill="#c058a0"/><rect x="47" y="12" width="2" height="2" fill="#98c0b0"/><rect x="48" y="12" width="2" height="2" fill="#3890c8"/><rect x="0" y="13" width="2" height="2" fill="#e8a8c0"/><rect x="1" y="13" width="2" height="2" fill="#d8a8c0"/><rect x="2" y="13" width="2" height="2" fill="#d0a8c0"/><rect x="3" y="13" width="2" height="2" fill="#c0a8c8"/><rect x="4" y="13" width="2" height="2" fill="#b0a8c8"/><rect x="5" y="13" width="2" height="2" fill="#90a0c8"/><rect x="6" y="13" width="2" height="2" fill="#6898c8"/><rect x="7" y="13" width="2" height="2" fill="#3088c8"/><rect x="8" y="13" width="2" height="2" fill="#3080c8"/><rect x="9" y="13" width="2" height="2" fill="#f0a890"/><rect x="10" y="13" width="2" height="2" fill="#e0a090"/><rect x="11" y="13" width="2" height="2" fill="#d0a090"/><rect x="12" y="13" width="2" height="2" fill="#c0a090"/><rect x="13" y="13" width="2" height="2" fill="#b09890"/><rect x="14" y="13" width="2" height="2" fill="#909090"/><rect x="15" y="13" width="2" height="2" fill="#709098"/><rect x="16" y="13" width="2" height="2" fill="#308898"/><rect x="17" y="13" width="2" height="2" fill="#288898"/><rect x="18" y="13" width="2" height="2" fill="#f0a030"/><rect x="19" y="13" width="2" height="2" fill="#e09830"/><rect x="20" y="13" width="2" height="2" fill="#d09838"/><rect x="21" y="13" width="2" height="2" fill="#c09040"/><rect x="22" y="13" width="2" height="2" fill="#b09040"/><rect x="23" y="13" width="2" height="2" fill="#909040"/><rect x="24" y="13" width="2" height="2" fill="#708840"/><rect x="25" y="13" width="2" height="2" fill="#308048"/><rect x="26" y="13" width="2" height="2" fill="#208050"/><rect x="27" y="13" width="2" height="2" fill="#a7a180"/><rect x="28" y="13" width="2" height="2" fill="#969e7f"/><rect x="29" y="13" width="2" height="2" fill="#889276"/><rect x="30" y="13" width="2" height="2" fill="#308070"/><rect x="31" y="13" width="2" height="2" fill="#107870"/><rect x="32" y="13" width="2" height="2" fill="#8b886d"/><rect x="33" y="13" width="2" height="2" fill="#7d7d6c"/><rect x="34" y="13" width="2" height="2" fill="#6e796b"/><rect x="35" y="13" width="2" height="2" fill="#307070"/><rect x="36" y="13" width="2" height="2" fill="#107070"/><rect x="37" y="13" width="2" height="2" fill="#508878"/><rect x="38" y="13" width="2" height="2" fill="#a08898"/><rect x="39" y="13" width="2" height="2" fill="#8888c8"/><rect x="40" y="13" width="2" height="2" fill="#f0f0f8"/><rect x="41" y="13" width="2" height="2" fill="#4b4b4b"/><rect x="42" y="13" width="2" height="2" fill="#f8d818"/><rect x="43" y="13" width="2" height="2" fill="#e04291"/><rect x="44" y="13" width="2" height="2" fill="#38a0e0"/><rect x="45" y="13" width="2" height="2" fill="#e8c898"/><rect x="46" y="13" width="2" height="2" fill="#c05898"/><rect x="47" y="13" width="2" height="2" fill="#a0c060"/><rect x="48" y="13" width="2" height="2" fill="#3890c8"/><rect x="0" y="14" width="2" height="2" fill="#f0c0d0"/><rect x="1" y="14" width="2" height="2" fill="#e0c0d0"/><rect x="2" y="14" width="2" height="2" fill="#d0c0d8"/><rect x="3" y="14" width="2" height="2" fill="#c0b8d8"/><rect x="4" y="14" width="2" height="2" fill="#b0b8d8"/><rect x="5" y="14" width="2" height="2" fill="#90b0d8"/><rect x="6" y="14" width="2" height="2" fill="#60a0d8"/><rect x="7" y="14" width="2" height="2" fill="#3890d0"/><rect x="8" y="14" width="2" height="2" fill="#3888d0"/><rect x="9" y="14" width="2" height="2" fill="#f0c0a0"/><rect x="10" y="14" width="2" height="2" fill="#e0b8a0"/><rect x="11" y="14" width="2" height="2" fill="#d0b8a0"/><rect x="12" y="14" width="2" height="2" fill="#c0b0a0"/><rect x="13" y="14" width="2" height="2" fill="#b0b0a0"/><rect x="14" y="14" width="2" height="2" fill="#90a8a0"/><rect x="15" y="14" width="2" height="2" fill="#6098a0"/><rect x="16" y="14" width="2" height="2" fill="#2890a0"/><rect x="17" y="14" width="2" height="2" fill="#2888a0"/><rect x="18" y="14" width="2" height="2" fill="#f0b830"/><rect x="19" y="14" width="2" height="2" fill="#e8b838"/><rect x="20" y="14" width="2" height="2" fill="#d8b040"/><rect x="21" y="14" width="2" height="2" fill="#c0a840"/><rect x="22" y="14" width="2" height="2" fill="#b0a840"/><rect x="23" y="14" width="2" height="2" fill="#90a040"/><rect x="24" y="14" width="2" height="2" fill="#709848"/><rect x="25" y="14" width="2" height="2" fill="#309050"/><rect x="26" y="14" width="2" height="2" fill="#289058"/><rect x="27" y="14" width="2" height="2" fill="#adb386"/><rect x="28" y="14" width="2" height="2" fill="#98ab85"/><rect x="29" y="14" width="2" height="2" fill="#899d7c"/><rect x="30" y="14" width="2" height="2" fill="#309078"/><rect x="31" y="14" width="2" height="2" fill="#108078"/><rect x="32" y="14" width="2" height="2" fill="#969d6f"/><rect x="33" y="14" width="2" height="2" fill="#888e6e"/><rect x="34" y="14" width="2" height="2" fill="#7a876d"/><rect x="35" y="14" width="2" height="2" fill="#308078"/><rect x="36" y="14" width="2" height="2" fill="#107878"/><rect x="37" y="14" width="2" height="2" fill="#b06858"/><rect x="38" y="14" width="2" height="2" fill="#a0a8c0"/><rect x="39" y="14" width="2" height="2" fill="#f0eef8"/><rect x="40" y="14" width="2" height="2" fill="#f0eef8"/><rect x="41" y="14" width="2" height="2" fill="#525252"/><rect x="42" y="14" width="2" height="2" fill="#f8d818"/><rect x="43" y="14" width="2" height="2" fill="#e04795"/><rect x="44" y="14" width="2" height="2" fill="#38a0e0"/><rect x="45" y="14" width="2" height="2" fill="#e8c050"/><rect x="46" y="14" width="2" height="2" fill="#c05888"/><rect x="47" y="14" width="2" height="2" fill="#90b8e0"/><rect x="48" y="14" width="2" height="2" fill="#389088"/><rect x="0" y="15" width="2" height="2" fill="#f0d0d8"/><rect x="1" y="15" width="2" height="2" fill="#e0c8d8"/><rect x="2" y="15" width="2" height="2" fill="#d0c8d8"/><rect x="3" y="15" width="2" height="2" fill="#c0c0d8"/><rect x="4" y="15" width="2" height="2" fill="#b0c0d8"/><rect x="5" y="15" width="2" height="2" fill="#90b8d8"/><rect x="6" y="15" width="2" height="2" fill="#60a8d8"/><rect x="7" y="15" width="2" height="2" fill="#3898d0"/><rect x="8" y="15" width="2" height="2" fill="#3890d0"/><rect x="9" y="15" width="2" height="2" fill="#f0c0a8"/><rect x="10" y="15" width="2" height="2" fill="#e0b8a8"/><rect x="11" y="15" width="2" height="2" fill="#d0b8a8"/><rect x="12" y="15" width="2" height="2" fill="#c0b8a8"/><rect x="13" y="15" width="2" height="2" fill="#b0b0a8"/><rect x="14" y="15" width="2" height="2" fill="#90a8a8"/><rect x="15" y="15" width="2" height="2" fill="#60a0a8"/><rect x="16" y="15" width="2" height="2" fill="#2898a8"/><rect x="17" y="15" width="2" height="2" fill="#2890a8"/><rect x="18" y="15" width="2" height="2" fill="#f0c030"/><rect x="19" y="15" width="2" height="2" fill="#e0c038"/><rect x="20" y="15" width="2" height="2" fill="#d0b840"/><rect x="21" y="15" width="2" height="2" fill="#c0b040"/><rect x="22" y="15" width="2" height="2" fill="#b0a840"/><rect x="23" y="15" width="2" height="2" fill="#90a040"/><rect x="24" y="15" width="2" height="2" fill="#709848"/><rect x="25" y="15" width="2" height="2" fill="#309850"/><rect x="26" y="15" width="2" height="2" fill="#289858"/><rect x="27" y="15" width="2" height="2" fill="#b81858"/><rect x="28" y="15" width="2" height="2" fill="#a01860"/><rect x="29" y="15" width="2" height="2" fill="#902060"/><rect x="30" y="15" width="2" height="2" fill="#483060"/><rect x="31" y="15" width="2" height="2" fill="#283068"/><rect x="32" y="15" width="2" height="2" fill="#a01848"/><rect x="33" y="15" width="2" height="2" fill="#901850"/><rect x="34" y="15" width="2" height="2" fill="#882050"/><rect x="35" y="15" width="2" height="2" fill="#482858"/><rect x="36" y="15" width="2" height="2" fill="#282860"/><rect x="37" y="15" width="2" height="2" fill="#f0f0f8"/><rect x="38" y="15" width="2" height="2" fill="#a0a8c0"/><rect x="39" y="15" width="2" height="2" fill="#f0f0f8"/><rect x="40" y="15" width="2" height="2" fill="#88c0e0"/><rect x="41" y="15" width="2" height="2" fill="#595959"/><rect x="42" y="15" width="2" height="2" fill="#f8d818"/><rect x="43" y="15" width="2" height="2" fill="#e04c98"/><rect x="44" y="15" width="2" height="2" fill="#38a0e0"/><rect x="45" y="15" width="2" height="2" fill="#d8b0d0"/><rect x="46" y="15" width="2" height="2" fill="#c06878"/><rect x="47" y="15" width="2" height="2" fill="#90b8e0"/><rect x="48" y="15" width="2" height="2" fill="#389080"/><rect x="0" y="16" width="2" height="2" fill="#f0e0e0"/><rect x="1" y="16" width="2" height="2" fill="#e0d8e0"/><rect x="2" y="16" width="2" height="2" fill="#d0d0e0"/><rect x="3" y="16" width="2" height="2" fill="#c0d0e0"/><rect x="4" y="16" width="2" height="2" fill="#b0c8e0"/><rect x="5" y="16" width="2" height="2" fill="#90c0e0"/><rect x="6" y="16" width="2" height="2" fill="#60b0e0"/><rect x="7" y="16" width="2" height="2" fill="#38a0d8"/><rect x="8" y="16" width="2" height="2" fill="#3898d8"/><rect x="9" y="16" width="2" height="2" fill="#f0d8b8"/><rect x="10" y="16" width="2" height="2" fill="#e0d0b8"/><rect x="11" y="16" width="2" height="2" fill="#d0d0b8"/><rect x="12" y="16" width="2" height="2" fill="#c0c8b8"/><rect x="13" y="16" width="2" height="2" fill="#b0c0b8"/><rect x="14" y="16" width="2" height="2" fill="#90b8b8"/><rect x="15" y="16" width="2" height="2" fill="#60a8b0"/><rect x="16" y="16" width="2" height="2" fill="#28a0b0"/><rect x="17" y="16" width="2" height="2" fill="#2898b0"/><rect x="18" y="16" width="2" height="2" fill="#f0d030"/><rect x="19" y="16" width="2" height="2" fill="#e8c838"/><rect x="20" y="16" width="2" height="2" fill="#d8c840"/><rect x="21" y="16" width="2" height="2" fill="#c0c040"/><rect x="22" y="16" width="2" height="2" fill="#a8b840"/><rect x="23" y="16" width="2" height="2" fill="#88b040"/><rect x="24" y="16" width="2" height="2" fill="#60a848"/><rect x="25" y="16" width="2" height="2" fill="#30a050"/><rect x="26" y="16" width="2" height="2" fill="#309858"/><rect x="27" y="16" width="2" height="2" fill="#b05a7c"/><rect x="28" y="16" width="2" height="2" fill="#9f5c7f"/><rect x="29" y="16" width="2" height="2" fill="#905a85"/><rect x="30" y="16" width="2" height="2" fill="#445585"/><rect x="31" y="16" width="2" height="2" fill="#1e5688"/><rect x="32" y="16" width="2" height="2" fill="#9d516e"/><rect x="33" y="16" width="2" height="2" fill="#8f5276"/><rect x="34" y="16" width="2" height="2" fill="#834a76"/><rect x="35" y="16" width="2" height="2" fill="#3f4878"/><rect x="36" y="16" width="2" height="2" fill="#19437b"/><rect x="37" y="16" width="2" height="2" fill="#e8e8f0"/><rect x="38" y="16" width="2" height="2" fill="#f0f0f8"/><rect x="39" y="16" width="2" height="2" fill="#f0e0e8"/><rect x="40" y="16" width="2" height="2" fill="#f0f0f8"/><rect x="41" y="16" width="2" height="2" fill="#909090"/><rect x="42" y="16" width="2" height="2" fill="#f8d818"/><rect x="43" y="16" width="2" height="2" fill="#e04c98"/><rect x="44" y="16" width="2" height="2" fill="#48a8e8"/><rect x="45" y="16" width="2" height="2" fill="#e4e0ec"/><rect x="46" y="16" width="2" height="2" fill="#d8c898"/><rect x="47" y="16" width="2" height="2" fill="#c098b8"/><rect x="48" y="16" width="2" height="2" fill="#a05040"/><rect x="0" y="17" width="2" height="2" fill="#f8f0f0"/><rect x="1" y="17" width="2" height="2" fill="#e8e8f0"/><rect x="2" y="17" width="2" height="2" fill="#d8e0f0"/><rect x="3" y="17" width="2" height="2" fill="#c0d8f0"/><rect x="4" y="17" width="2" height="2" fill="#b0d0f0"/><rect x="5" y="17" width="2" height="2" fill="#90c8e8"/><rect x="6" y="17" width="2" height="2" fill="#60b8e8"/><rect x="7" y="17" width="2" height="2" fill="#38a8e0"/><rect x="8" y="17" width="2" height="2" fill="#38a0e0"/><rect x="9" y="17" width="2" height="2" fill="#f4e8c0"/><rect x="10" y="17" width="2" height="2" fill="#e8e0c0"/><rect x="11" y="17" width="2" height="2" fill="#d8d8c0"/><rect x="12" y="17" width="2" height="2" fill="#c0d0c0"/><rect x="13" y="17" width="2" height="2" fill="#b0c8c0"/><rect x="14" y="17" width="2" height="2" fill="#90c0b8"/><rect x="15" y="17" width="2" height="2" fill="#60b0b8"/><rect x="16" y="17" width="2" height="2" fill="#30a8b8"/><rect x="17" y="17" width="2" height="2" fill="#30a0b0"/><rect x="18" y="17" width="2" height="2" fill="#f0e030"/><rect x="19" y="17" width="2" height="2" fill="#e0d838"/><rect x="20" y="17" width="2" height="2" fill="#d0d040"/><rect x="21" y="17" width="2" height="2" fill="#b8c840"/><rect x="22" y="17" width="2" height="2" fill="#a0c040"/><rect x="23" y="17" width="2" height="2" fill="#80b840"/><rect x="24" y="17" width="2" height="2" fill="#50b048"/><rect x="25" y="17" width="2" height="2" fill="#30a850"/><rect x="26" y="17" width="2" height="2" fill="#30a058"/><rect x="27" y="17" width="2" height="2" fill="#b08898"/><rect x="28" y="17" width="2" height="2" fill="#a08898"/><rect x="29" y="17" width="2" height="2" fill="#9080a0"/><rect x="30" y="17" width="2" height="2" fill="#4070a0"/><rect x="31" y="17" width="2" height="2" fill="#1870a0"/><rect x="32" y="17" width="2" height="2" fill="#a07888"/><rect x="33" y="17" width="2" height="2" fill="#907890"/><rect x="34" y="17" width="2" height="2" fill="#806890"/><rect x="35" y="17" width="2" height="2" fill="#386090"/><rect x="36" y="17" width="2" height="2" fill="#105890"/><rect x="37" y="17" width="2" height="2" fill="#e8e4f0"/><rect x="38" y="17" width="2" height="2" fill="#f0f0f8"/><rect x="39" y="17" width="2" height="2" fill="#f0f0f8"/><rect x="40" y="17" width="2" height="2" fill="#c8d8e8"/><rect x="41" y="17" width="2" height="2" fill="#969696"/><rect x="42" y="17" width="2" height="2" fill="#f8d818"/><rect x="43" y="17" width="2" height="2" fill="#e04c98"/><rect x="44" y="17" width="2" height="2" fill="#48a8e8"/><rect x="45" y="17" width="2" height="2" fill="#e8e4ec"/><rect x="46" y="17" width="2" height="2" fill="#e0c050"/><rect x="47" y="17" width="2" height="2" fill="#c898a8"/><rect x="48" y="17" width="2" height="2" fill="#48a8d8"/><rect x="0" y="18" width="2" height="2" fill="#e0207a"/><rect x="1" y="18" width="2" height="2" fill="#dc1e79"/><rect x="2" y="18" width="2" height="2" fill="#d31d78"/><rect x="3" y="18" width="2" height="2" fill="#c41e79"/><rect x="4" y="18" width="2" height="2" fill="#b0207a"/><rect x="5" y="18" width="2" height="2" fill="#96247c"/><rect x="6" y="18" width="2" height="2" fill="#77297f"/><rect x="7" y="18" width="2" height="2" fill="#523083"/><rect x="8" y="18" width="2" height="2" fill="#283888"/><rect x="9" y="18" width="2" height="2" fill="#e01c58"/><rect x="10" y="18" width="2" height="2" fill="#d91b58"/><rect x="11" y="18" width="2" height="2" fill="#cd1b5a"/><rect x="12" y="18" width="2" height="2" fill="#bd1d5c"/><rect x="13" y="18" width="2" height="2" fill="#a82060"/><rect x="14" y="18" width="2" height="2" fill="#8f2564"/><rect x="15" y="18" width="2" height="2" fill="#712b6a"/><rect x="16" y="18" width="2" height="2" fill="#4f3370"/><rect x="17" y="18" width="2" height="2" fill="#283c78"/><rect x="18" y="18" width="2" height="2" fill="#e01838"/><rect x="19" y="18" width="2" height="2" fill="#d81c3a"/><rect x="20" y="18" width="2" height="2" fill="#cc203c"/><rect x="21" y="18" width="2" height="2" fill="#bc243e"/><rect x="22" y="18" width="2" height="2" fill="#a82840"/><rect x="23" y="18" width="2" height="2" fill="#902c42"/><rect x="24" y="18" width="2" height="2" fill="#743044"/><rect x="25" y="18" width="2" height="2" fill="#543446"/><rect x="26" y="18" width="2" height="2" fill="#303848"/><rect x="27" y="18" width="2" height="2" fill="#b8a2ac"/><rect x="28" y="18" width="2" height="2" fill="#a39cab"/><rect x="29" y="18" width="2" height="2" fill="#9092b1"/><rect x="30" y="18" width="2" height="2" fill="#3c81b1"/><rect x="31" y="18" width="2" height="2" fill="#167eb0"/><rect x="32" y="18" width="2" height="2" fill="#a98d96"/><rect x="33" y="18" width="2" height="2" fill="#938a9e"/><rect x="34" y="18" width="2" height="2" fill="#7f7a9e"/><rect x="35" y="18" width="2" height="2" fill="#3370a0"/><rect x="36" y="18" width="2" height="2" fill="#0d679f"/><rect x="37" y="18" width="2" height="2" fill="#e8e8f0"/><rect x="38" y="18" width="2" height="2" fill="#e8e8f0"/><rect x="39" y="18" width="2" height="2" fill="#f0f0f8"/><rect x="40" y="18" width="2" height="2" fill="#f0f0f8"/><rect x="41" y="18" width="2" height="2" fill="#9c9c9c"/><rect x="42" y="18" width="2" height="2" fill="#f8d818"/><rect x="43" y="18" width="2" height="2" fill="#e04c98"/><rect x="44" y="18" width="2" height="2" fill="#48a8e8"/><rect x="45" y="18" width="2" height="2" fill="#e8e0e4"/><rect x="46" y="18" width="2" height="2" fill="#d0c0e0"/><rect x="47" y="18" width="2" height="2" fill="#d09890"/><rect x="48" y="18" width="2" height="2" fill="#40a0d0"/><rect x="0" y="19" width="2" height="2" fill="#e13e89"/><rect x="1" y="19" width="2" height="2" fill="#dd3d8a"/><rect x="2" y="19" width="2" height="2" fill="#d33d8b"/><rect x="3" y="19" width="2" height="2" fill="#c43e8c"/><rect x="4" y="19" width="2" height="2" fill="#af408e"/><rect x="5" y="19" width="2" height="2" fill="#954290"/><rect x="6" y="19" width="2" height="2" fill="#764592"/><rect x="7" y="19" width="2" height="2" fill="#514995"/><rect x="8" y="19" width="2" height="2" fill="#264e98"/><rect x="9" y="19" width="2" height="2" fill="#e23c67"/><rect x="10" y="19" width="2" height="2" fill="#db3c69"/><rect x="11" y="19" width="2" height="2" fill="#cf3d6b"/><rect x="12" y="19" width="2" height="2" fill="#bf3f6e"/><rect x="13" y="19" width="2" height="2" fill="#aa4071"/><rect x="14" y="19" width="2" height="2" fill="#904375"/><rect x="15" y="19" width="2" height="2" fill="#724679"/><rect x="16" y="19" width="2" height="2" fill="#4f497d"/><rect x="17" y="19" width="2" height="2" fill="#274d82"/><rect x="18" y="19" width="2" height="2" fill="#e23a3b"/><rect x="19" y="19" width="2" height="2" fill="#d93c3d"/><rect x="20" y="19" width="2" height="2" fill="#cd3d3f"/><rect x="21" y="19" width="2" height="2" fill="#bc3f41"/><rect x="22" y="19" width="2" height="2" fill="#a74044"/><rect x="23" y="19" width="2" height="2" fill="#8f4245"/><rect x="24" y="19" width="2" height="2" fill="#724347"/><rect x="25" y="19" width="2" height="2" fill="#514549"/><rect x="26" y="19" width="2" height="2" fill="#2c474b"/><rect x="27" y="19" width="2" height="2" fill="#c8a8b8"/><rect x="28" y="19" width="2" height="2" fill="#a898b8"/><rect x="29" y="19" width="2" height="2" fill="#9090b8"/><rect x="30" y="19" width="2" height="2" fill="#3888b8"/><rect x="31" y="19" width="2" height="2" fill="#1880b8"/><rect x="32" y="19" width="2" height="2" fill="#b89098"/><rect x="33" y="19" width="2" height="2" fill="#9888a0"/><rect x="34" y="19" width="2" height="2" fill="#8080a0"/><rect x="35" y="19" width="2" height="2" fill="#3078a8"/><rect x="36" y="19" width="2" height="2" fill="#1070a8"/><rect x="37" y="19" width="2" height="2" fill="#e8e0d0"/><rect x="38" y="19" width="2" height="2" fill="#f0f0f8"/><rect x="39" y="19" width="2" height="2" fill="#e8e8f0"/><rect x="40" y="19" width="2" height="2" fill="#f0f0f8"/><rect x="41" y="19" width="2" height="2" fill="#a2a2a2"/><rect x="42" y="19" width="2" height="2" fill="#f8d818"/><rect x="43" y="19" width="2" height="2" fill="#e04c98"/><rect x="44" y="19" width="2" height="2" fill="#48a8e8"/><rect x="45" y="19" width="2" height="2" fill="#f0e4b8"/><rect x="46" y="19" width="2" height="2" fill="#d0c0d8"/><rect x="47" y="19" width="2" height="2" fill="#d09050"/><rect x="48" y="19" width="2" height="2" fill="#40a0c0"/><rect x="0" y="20" width="2" height="2" fill="#e35a99"/><rect x="1" y="20" width="2" height="2" fill="#de5b9a"/><rect x="2" y="20" width="2" height="2" fill="#d45b9c"/><rect x="3" y="20" width="2" height="2" fill="#c45c9e"/><rect x="4" y="20" width="2" height="2" fill="#af5da0"/><rect x="5" y="20" width="2" height="2" fill="#955ea2"/><rect x="6" y="20" width="2" height="2" fill="#755fa3"/><rect x="7" y="20" width="2" height="2" fill="#5060a5"/><rect x="8" y="20" width="2" height="2" fill="#2661a7"/><rect x="9" y="20" width="2" height="2" fill="#e45a75"/><rect x="10" y="20" width="2" height="2" fill="#dd5b78"/><rect x="11" y="20" width="2" height="2" fill="#d15c7a"/><rect x="12" y="20" width="2" height="2" fill="#c15d7d"/><rect x="13" y="20" width="2" height="2" fill="#ac5e80"/><rect x="14" y="20" width="2" height="2" fill="#925e83"/><rect x="15" y="20" width="2" height="2" fill="#735e86"/><rect x="16" y="20" width="2" height="2" fill="#505d88"/><rect x="17" y="20" width="2" height="2" fill="#275c8b"/><rect x="18" y="20" width="2" height="2" fill="#e45a3d"/><rect x="19" y="20" width="2" height="2" fill="#db593f"/><rect x="20" y="20" width="2" height="2" fill="#ce5842"/><rect x="21" y="20" width="2" height="2" fill="#bc5844"/><rect x="22" y="20" width="2" height="2" fill="#a75746"/><rect x="23" y="20" width="2" height="2" fill="#8e5648"/><rect x="24" y="20" width="2" height="2" fill="#70564a"/><rect x="25" y="20" width="2" height="2" fill="#4f554b"/><rect x="26" y="20" width="2" height="2" fill="#2a554d"/><rect x="27" y="20" width="2" height="2" fill="#b81858"/><rect x="28" y="20" width="2" height="2" fill="#a01860"/><rect x="29" y="20" width="2" height="2" fill="#902060"/><rect x="30" y="20" width="2" height="2" fill="#483060"/><rect x="31" y="20" width="2" height="2" fill="#283068"/><rect x="32" y="20" width="2" height="2" fill="#a01848"/><rect x="33" y="20" width="2" height="2" fill="#901850"/><rect x="34" y="20" width="2" height="2" fill="#882050"/><rect x="35" y="20" width="2" height="2" fill="#482858"/><rect x="36" y="20" width="2" height="2" fill="#282860"/><rect x="37" y="20" width="2" height="2" fill="#e8e0d0"/><rect x="38" y="20" width="2" height="2" fill="#f0f0f8"/><rect x="39" y="20" width="2" height="2" fill="#e8e4f0"/><rect x="40" y="20" width="2" height="2" fill="#f0f0f8"/><rect x="41" y="20" width="2" height="2" fill="#a8a8a8"/><rect x="42" y="20" width="2" height="2" fill="#f8d818"/><rect x="43" y="20" width="2" height="2" fill="#e04c98"/><rect x="44" y="20" width="2" height="2" fill="#48a8e8"/><rect x="45" y="20" width="2" height="2" fill="#e8d858"/><rect x="46" y="20" width="2" height="2" fill="#d8c0c8"/><rect x="47" y="20" width="2" height="2" fill="#c060a0"/><rect x="48" y="20" width="2" height="2" fill="#40a0a0"/><rect x="0" y="21" width="2" height="2" fill="#e576a8"/><rect x="1" y="21" width="2" height="2" fill="#e077ab"/><rect x="2" y="21" width="2" height="2" fill="#d578ad"/><rect x="3" y="21" width="2" height="2" fill="#c578af"/><rect x="4" y="21" width="2" height="2" fill="#af78b1"/><rect x="5" y="21" width="2" height="2" fill="#9577b2"/><rect x="6" y="21" width="2" height="2" fill="#7576b3"/><rect x="7" y="21" width="2" height="2" fill="#5074b4"/><rect x="8" y="21" width="2" height="2" fill="#2672b4"/><rect x="9" y="21" width="2" height="2" fill="#e67683"/><rect x="10" y="21" width="2" height="2" fill="#df7886"/><rect x="11" y="21" width="2" height="2" fill="#d47988"/><rect x="12" y="21" width="2" height="2" fill="#c3798b"/><rect x="13" y="21" width="2" height="2" fill="#ae788d"/><rect x="14" y="21" width="2" height="2" fill="#94778f"/><rect x="15" y="21" width="2" height="2" fill="#757490"/><rect x="16" y="21" width="2" height="2" fill="#507091"/><rect x="17" y="21" width="2" height="2" fill="#276b92"/><rect x="18" y="21" width="2" height="2" fill="#e6763f"/><rect x="19" y="21" width="2" height="2" fill="#dc7441"/><rect x="20" y="21" width="2" height="2" fill="#cf7143"/><rect x="21" y="21" width="2" height="2" fill="#bd6f45"/><rect x="22" y="21" width="2" height="2" fill="#a76c48"/><rect x="23" y="21" width="2" height="2" fill="#8e6a49"/><rect x="24" y="21" width="2" height="2" fill="#70674b"/><rect x="25" y="21" width="2" height="2" fill="#4e654d"/><rect x="26" y="21" width="2" height="2" fill="#28634f"/><rect x="27" y="21" width="2" height="2" fill="#b05a7c"/><rect x="28" y="21" width="2" height="2" fill="#9f5c7f"/><rect x="29" y="21" width="2" height="2" fill="#905a85"/><rect x="30" y="21" width="2" height="2" fill="#445585"/><rect x="31" y="21" width="2" height="2" fill="#1e5688"/><rect x="32" y="21" width="2" height="2" fill="#9d516e"/><rect x="33" y="21" width="2" height="2" fill="#8f5276"/><rect x="34" y="21" width="2" height="2" fill="#834a76"/><rect x="35" y="21" width="2" height="2" fill="#3f4878"/><rect x="36" y="21" width="2" height="2" fill="#19437b"/><rect x="37" y="21" width="2" height="2" fill="#f0f0f8"/><rect x="38" y="21" width="2" height="2" fill="#c8d8e8"/><rect x="39" y="21" width="2" height="2" fill="#f0f0f8"/><rect x="40" y="21" width="2" height="2" fill="#c8d8e8"/><rect x="41" y="21" width="2" height="2" fill="#aeaeae"/><rect x="42" y="21" width="2" height="2" fill="#f8d818"/><rect x="43" y="21" width="2" height="2" fill="#e04c98"/><rect x="44" y="21" width="2" height="2" fill="#48a8e8"/><rect x="45" y="21" width="2" height="2" fill="#e0d8e8"/><rect x="46" y="21" width="2" height="2" fill="#d8c098"/><rect x="47" y="21" width="2" height="2" fill="#c058a0"/><rect x="48" y="21" width="2" height="2" fill="#40a060"/><rect x="0" y="22" width="2" height="2" fill="#e890b8"/><rect x="1" y="22" width="2" height="2" fill="#e292bb"/><rect x="2" y="22" width="2" height="2" fill="#d692bd"/><rect x="3" y="22" width="2" height="2" fill="#c692bf"/><rect x="4" y="22" width="2" height="2" fill="#b090c0"/><rect x="5" y="22" width="2" height="2" fill="#968ec1"/><rect x="6" y="22" width="2" height="2" fill="#768ac1"/><rect x="7" y="22" width="2" height="2" fill="#5286c1"/><rect x="8" y="22" width="2" height="2" fill="#2880c0"/><rect x="9" y="22" width="2" height="2" fill="#e89090"/><rect x="10" y="22" width="2" height="2" fill="#e29293"/><rect x="11" y="22" width="2" height="2" fill="#d69395"/><rect x="12" y="22" width="2" height="2" fill="#c69297"/><rect x="13" y="22" width="2" height="2" fill="#b09098"/><rect x="14" y="22" width="2" height="2" fill="#968c99"/><rect x="15" y="22" width="2" height="2" fill="#768799"/><rect x="16" y="22" width="2" height="2" fill="#528099"/><rect x="17" y="22" width="2" height="2" fill="#287898"/><rect x="18" y="22" width="2" height="2" fill="#e89040"/><rect x="19" y="22" width="2" height="2" fill="#de8c42"/><rect x="20" y="22" width="2" height="2" fill="#d08844"/><rect x="21" y="22" width="2" height="2" fill="#be8446"/><rect x="22" y="22" width="2" height="2" fill="#a88048"/><rect x="23" y="22" width="2" height="2" fill="#8e7c4a"/><rect x="24" y="22" width="2" height="2" fill="#70784c"/><rect x="25" y="22" width="2" height="2" fill="#4e744e"/><rect x="26" y="22" width="2" height="2" fill="#287050"/><rect x="27" y="22" width="2" height="2" fill="#b08898"/><rect x="28" y="22" width="2" height="2" fill="#a08898"/><rect x="29" y="22" width="2" height="2" fill="#9080a0"/><rect x="30" y="22" width="2" height="2" fill="#4070a0"/><rect x="31" y="22" width="2" height="2" fill="#1870a0"/><rect x="32" y="22" width="2" height="2" fill="#a07888"/><rect x="33" y="22" width="2" height="2" fill="#907890"/><rect x="34" y="22" width="2" height="2" fill="#806890"/><rect x="35" y="22" width="2" height="2" fill="#386090"/><rect x="36" y="22" width="2" height="2" fill="#105890"/><rect x="37" y="22" width="2" height="2" fill="#f0f0f8"/><rect x="38" y="22" width="2" height="2" fill="#e8e0d0"/><rect x="39" y="22" width="2" height="2" fill="#e8e0d0"/><rect x="40" y="22" width="2" height="2" fill="#e8e0d0"/><rect x="41" y="22" width="2" height="2" fill="#b4b4b4"/><rect x="42" y="22" width="2" height="2" fill="#f8d818"/><rect x="43" y="22" width="2" height="2" fill="#e04c98"/><rect x="44" y="22" width="2" height="2" fill="#48a8e8"/><rect x="45" y="22" width="2" height="2" fill="#e8d8d0"/><rect x="46" y="22" width="2" height="2" fill="#e0c050"/><rect x="47" y="22" width="2" height="2" fill="#c06090"/><rect x="48" y="22" width="2" height="2" fill="#48a0d8"/><rect x="0" y="23" width="2" height="2" fill="#ebaac8"/><rect x="1" y="23" width="2" height="2" fill="#e4abca"/><rect x="2" y="23" width="2" height="2" fill="#d8aacc"/><rect x="3" y="23" width="2" height="2" fill="#c7a9cd"/><rect x="4" y="23" width="2" height="2" fill="#b1a6ce"/><rect x="5" y="23" width="2" height="2" fill="#97a1ce"/><rect x="6" y="23" width="2" height="2" fill="#779ccd"/><rect x="7" y="23" width="2" height="2" fill="#5394cc"/><rect x="8" y="23" width="2" height="2" fill="#2a8cca"/><rect x="9" y="23" width="2" height="2" fill="#eba99d"/><rect x="10" y="23" width="2" height="2" fill="#e4aa9f"/><rect x="11" y="23" width="2" height="2" fill="#d8aaa0"/><rect x="12" y="23" width="2" height="2" fill="#c8a8a1"/><rect x="13" y="23" width="2" height="2" fill="#b2a4a1"/><rect x="14" y="23" width="2" height="2" fill="#979fa1"/><rect x="15" y="23" width="2" height="2" fill="#7898a0"/><rect x="16" y="23" width="2" height="2" fill="#538f9e"/><rect x="17" y="23" width="2" height="2" fill="#29849c"/><rect x="18" y="23" width="2" height="2" fill="#eaa641"/><rect x="19" y="23" width="2" height="2" fill="#e0a242"/><rect x="20" y="23" width="2" height="2" fill="#d29d44"/><rect x="21" y="23" width="2" height="2" fill="#bf9746"/><rect x="22" y="23" width="2" height="2" fill="#a99248"/><rect x="23" y="23" width="2" height="2" fill="#8f8d4a"/><rect x="24" y="23" width="2" height="2" fill="#71884c"/><rect x="25" y="23" width="2" height="2" fill="#4f824e"/><rect x="26" y="23" width="2" height="2" fill="#287d51"/><rect x="27" y="23" width="2" height="2" fill="#b8a2ac"/><rect x="28" y="23" width="2" height="2" fill="#a39cab"/><rect x="29" y="23" width="2" height="2" fill="#9092b1"/><rect x="30" y="23" width="2" height="2" fill="#3c81b1"/><rect x="31" y="23" width="2" height="2" fill="#167eb0"/><rect x="32" y="23" width="2" height="2" fill="#a98d96"/><rect x="33" y="23" width="2" height="2" fill="#938a9e"/><rect x="34" y="23" width="2" height="2" fill="#7f7a9e"/><rect x="35" y="23" width="2" height="2" fill="#3370a0"/><rect x="36" y="23" width="2" height="2" fill="#0d679f"/><rect x="37" y="23" width="2" height="2" fill="#f0f0f8"/><rect x="38" y="23" width="2" height="2" fill="#f0f0f8"/><rect x="39" y="23" width="2" height="2" fill="#f0e0e8"/><rect x="40" y="23" width="2" height="2" fill="#e8e4f0"/><rect x="41" y="23" width="2" height="2" fill="#bababa"/><rect x="42" y="23" width="2" height="2" fill="#f8d818"/><rect x="43" y="23" width="2" height="2" fill="#e04c98"/><rect x="44" y="23" width="2" height="2" fill="#48a8e8"/><rect x="45" y="23" width="2" height="2" fill="#ecd8c0"/><rect x="46" y="23" width="2" height="2" fill="#d0a8d0"/><rect x="47" y="23" width="2" height="2" fill="#c06070"/><rect x="48" y="23" width="2" height="2" fill="#48a0d0"/><rect x="0" y="24" width="2" height="2" fill="#efc2d8"/><rect x="1" y="24" width="2" height="2" fill="#e7c2da"/><rect x="2" y="24" width="2" height="2" fill="#dac1db"/><rect x="3" y="24" width="2" height="2" fill="#c9bedb"/><rect x="4" y="24" width="2" height="2" fill="#b3b9db"/><rect x="5" y="24" width="2" height="2" fill="#99b3da"/><rect x="6" y="24" width="2" height="2" fill="#7aaad8"/><rect x="7" y="24" width="2" height="2" fill="#56a1d6"/><rect x="8" y="24" width="2" height="2" fill="#2e95d3"/><rect x="9" y="24" width="2" height="2" fill="#eec0a9"/><rect x="10" y="24" width="2" height="2" fill="#e7c0aa"/><rect x="11" y="24" width="2" height="2" fill="#dbbeaa"/><rect x="12" y="24" width="2" height="2" fill="#cabba9"/><rect x="13" y="24" width="2" height="2" fill="#b4b6a8"/><rect x="14" y="24" width="2" height="2" fill="#99afa6"/><rect x="15" y="24" width="2" height="2" fill="#79a6a4"/><rect x="16" y="24" width="2" height="2" fill="#559ba2"/><rect x="17" y="24" width="2" height="2" fill="#2b8e9f"/><rect x="18" y="24" width="2" height="2" fill="#ecba41"/><rect x="19" y="24" width="2" height="2" fill="#e2b542"/><rect x="20" y="24" width="2" height="2" fill="#d4af43"/><rect x="21" y="24" width="2" height="2" fill="#c1a944"/><rect x="22" y="24" width="2" height="2" fill="#aba346"/><rect x="23" y="24" width="2" height="2" fill="#919d48"/><rect x="24" y="24" width="2" height="2" fill="#72964b"/><rect x="25" y="24" width="2" height="2" fill="#50904e"/><rect x="26" y="24" width="2" height="2" fill="#2a8951"/><rect x="27" y="24" width="2" height="2" fill="#c8a8b8"/><rect x="28" y="24" width="2" height="2" fill="#a898b8"/><rect x="29" y="24" width="2" height="2" fill="#9090b8"/><rect x="30" y="24" width="2" height="2" fill="#3888b8"/><rect x="31" y="24" width="2" height="2" fill="#1880b8"/><rect x="32" y="24" width="2" height="2" fill="#b89098"/><rect x="33" y="24" width="2" height="2" fill="#9888a0"/><rect x="34" y="24" width="2" height="2" fill="#8080a0"/><rect x="35" y="24" width="2" height="2" fill="#3078a8"/><rect x="36" y="24" width="2" height="2" fill="#1070a8"/><rect x="37" y="24" width="2" height="2" fill="#f0f0f8"/><rect x="38" y="24" width="2" height="2" fill="#f0f0f8"/><rect x="39" y="24" width="2" height="2" fill="#f0f0f8"/><rect x="40" y="24" width="2" height="2" fill="#e8e8f0"/><rect x="41" y="24" width="2" height="2" fill="#c0c0c0"/><rect x="42" y="24" width="2" height="2" fill="#f8d818"/><rect x="43" y="24" width="2" height="2" fill="#e04c98"/><rect x="44" y="24" width="2" height="2" fill="#48a8e8"/><rect x="45" y="24" width="2" height="2" fill="#ecd0a0"/><rect x="46" y="24" width="2" height="2" fill="#d0a0c0"/><rect x="47" y="24" width="2" height="2" fill="#c05848"/><rect x="48" y="24" width="2" height="2" fill="#40a0c0"/><rect x="0" y="25" width="2" height="2" fill="#f3dae8"/><rect x="1" y="25" width="2" height="2" fill="#ead8e8"/><rect x="2" y="25" width="2" height="2" fill="#ddd5e8"/><rect x="3" y="25" width="2" height="2" fill="#cbd1e7"/><rect x="4" y="25" width="2" height="2" fill="#b5cae6"/><rect x="5" y="25" width="2" height="2" fill="#9bc1e4"/><rect x="6" y="25" width="2" height="2" fill="#7cb7e1"/><rect x="7" y="25" width="2" height="2" fill="#5aaade"/><rect x="8" y="25" width="2" height="2" fill="#329cda"/><rect x="9" y="25" width="2" height="2" fill="#f1d5b5"/><rect x="10" y="25" width="2" height="2" fill="#e9d3b3"/><rect x="11" y="25" width="2" height="2" fill="#ddd0b2"/><rect x="12" y="25" width="2" height="2" fill="#cccbaf"/><rect x="13" y="25" width="2" height="2" fill="#b6c4ad"/><rect x="14" y="25" width="2" height="2" fill="#9bbcaa"/><rect x="15" y="25" width="2" height="2" fill="#7bb2a7"/><rect x="16" y="25" width="2" height="2" fill="#57a6a4"/><rect x="17" y="25" width="2" height="2" fill="#2d98a0"/><rect x="18" y="25" width="2" height="2" fill="#eeca41"/><rect x="19" y="25" width="2" height="2" fill="#e4c540"/><rect x="20" y="25" width="2" height="2" fill="#d6bf41"/><rect x="21" y="25" width="2" height="2" fill="#c3b942"/><rect x="22" y="25" width="2" height="2" fill="#adb244"/><rect x="23" y="25" width="2" height="2" fill="#93ab46"/><rect x="24" y="25" width="2" height="2" fill="#75a449"/><rect x="25" y="25" width="2" height="2" fill="#539d4c"/><rect x="26" y="25" width="2" height="2" fill="#2c9551"/><rect x="27" y="25" width="2" height="2" fill="#282828"/><rect x="28" y="25" width="2" height="2" fill="#282828"/><rect x="29" y="25" width="2" height="2" fill="#282828"/><rect x="30" y="25" width="2" height="2" fill="#282828"/><rect x="31" y="25" width="2" height="2" fill="#282828"/><rect x="32" y="25" width="2" height="2" fill="#282828"/><rect x="33" y="25" width="2" height="2" fill="#282828"/><rect x="34" y="25" width="2" height="2" fill="#282828"/><rect x="35" y="25" width="2" height="2" fill="#282828"/><rect x="36" y="25" width="2" height="2" fill="#282828"/><rect x="37" y="25" width="2" height="2" fill="#c8d8e8"/><rect x="38" y="25" width="2" height="2" fill="#e8e0d0"/><rect x="39" y="25" width="2" height="2" fill="#c8d8e8"/><rect x="40" y="25" width="2" height="2" fill="#e8e0d0"/><rect x="41" y="25" width="2" height="2" fill="#c6c6c6"/><rect x="42" y="25" width="2" height="2" fill="#f8d818"/><rect x="43" y="25" width="2" height="2" fill="#e04c98"/><rect x="44" y="25" width="2" height="2" fill="#48a8e8"/><rect x="45" y="25" width="2" height="2" fill="#e8c858"/><rect x="46" y="25" width="2" height="2" fill="#d8a0b0"/><rect x="47" y="25" width="2" height="2" fill="#90c0e0"/><rect x="48" y="25" width="2" height="2" fill="#40a0a0"/><rect x="0" y="26" width="2" height="2" fill="#f8f0f8"/><rect x="1" y="26" width="2" height="2" fill="#eeedf7"/><rect x="2" y="26" width="2" height="2" fill="#e0e8f5"/><rect x="3" y="26" width="2" height="2" fill="#cee1f3"/><rect x="4" y="26" width="2" height="2" fill="#b8d8f0"/><rect x="5" y="26" width="2" height="2" fill="#9ecded"/><rect x="6" y="26" width="2" height="2" fill="#80c0e9"/><rect x="7" y="26" width="2" height="2" fill="#5eb1e5"/><rect x="8" y="26" width="2" height="2" fill="#38a0e0"/><rect x="9" y="26" width="2" height="2" fill="#f4e8c0"/><rect x="10" y="26" width="2" height="2" fill="#ece4bc"/><rect x="11" y="26" width="2" height="2" fill="#e0dfb8"/><rect x="12" y="26" width="2" height="2" fill="#ced8b4"/><rect x="13" y="26" width="2" height="2" fill="#b8d0b0"/><rect x="14" y="26" width="2" height="2" fill="#9dc6ac"/><rect x="15" y="26" width="2" height="2" fill="#7ebba8"/><rect x="16" y="26" width="2" height="2" fill="#59aea4"/><rect x="17" y="26" width="2" height="2" fill="#30a0a0"/><rect x="18" y="26" width="2" height="2" fill="#f0d840"/><rect x="19" y="26" width="2" height="2" fill="#e6d33e"/><rect x="20" y="26" width="2" height="2" fill="#d8cd3e"/><rect x="21" y="26" width="2" height="2" fill="#c6c73e"/><rect x="22" y="26" width="2" height="2" fill="#b0c040"/><rect x="23" y="26" width="2" height="2" fill="#96b942"/><rect x="24" y="26" width="2" height="2" fill="#78b146"/><rect x="25" y="26" width="2" height="2" fill="#56a94a"/><rect x="26" y="26" width="2" height="2" fill="#30a050"/><rect x="27" y="26" width="2" height="2" fill="#282828"/><rect x="28" y="26" width="2" height="2" fill="#282828"/><rect x="29" y="26" width="2" height="2" fill="#282828"/><rect x="30" y="26" width="2" height="2" fill="#282828"/><rect x="31" y="26" width="2" height="2" fill="#282828"/><rect x="32" y="26" width="2" height="2" fill="#282828"/><rect x="33" y="26" width="2" height="2" fill="#282828"/><rect x="34" y="26" width="2" height="2" fill="#282828"/><rect x="35" y="26" width="2" height="2" fill="#505050"/><rect x="36" y="26" width="2" height="2" fill="#505050"/><rect x="37" y="26" width="2" height="2" fill="#989898"/><rect x="38" y="26" width="2" height="2" fill="#a4a4a4"/><rect x="39" y="26" width="2" height="2" fill="#b0b0b0"/><rect x="40" y="26" width="2" height="2" fill="#bcbcbc"/><rect x="41" y="26" width="2" height="2" fill="#c8c8c8"/><rect x="42" y="26" width="2" height="2" fill="#d4d4d4"/><rect x="43" y="26" width="2" height="2" fill="#e0e0e0"/><rect x="44" y="26" width="2" height="2" fill="#ececec"/><rect x="45" y="26" width="2" height="2" fill="#d8c0e0"/><rect x="46" y="26" width="2" height="2" fill="#d09890"/><rect x="47" y="26" width="2" height="2" fill="#88c0d8"/><rect x="48" y="26" width="2" height="2" fill="#40a060"/><rect x="0" y="27" width="2" height="2" fill="#c02070"/><rect x="1" y="27" width="2" height="2" fill="#b42777"/><rect x="2" y="27" width="2" height="2" fill="#9e2d7d"/><rect x="3" y="27" width="2" height="2" fill="#803282"/><rect x="4" y="27" width="2" height="2" fill="#583686"/><rect x="5" y="27" width="2" height="2" fill="#283888"/><rect x="6" y="27" width="2" height="2" fill="#c02070"/><rect x="7" y="27" width="2" height="2" fill="#b42777"/><rect x="8" y="27" width="2" height="2" fill="#9e2d7d"/><rect x="9" y="27" width="2" height="2" fill="#803282"/><rect x="10" y="27" width="2" height="2" fill="#583686"/><rect x="11" y="27" width="2" height="2" fill="#283888"/><rect x="12" y="27" width="2" height="2" fill="#c02060"/><rect x="13" y="27" width="2" height="2" fill="#b42766"/><rect x="14" y="27" width="2" height="2" fill="#9e2d6d"/><rect x="15" y="27" width="2" height="2" fill="#803273"/><rect x="16" y="27" width="2" height="2" fill="#58367a"/><rect x="17" y="27" width="2" height="2" fill="#283880"/><rect x="18" y="27" width="2" height="2" fill="#c01c58"/><rect x="19" y="27" width="2" height="2" fill="#b4255a"/><rect x="20" y="27" width="2" height="2" fill="#9e2d5e"/><rect x="21" y="27" width="2" height="2" fill="#803363"/><rect x="22" y="27" width="2" height="2" fill="#583669"/><rect x="23" y="27" width="2" height="2" fill="#283870"/><rect x="24" y="27" width="2" height="2" fill="#d02030"/><rect x="25" y="27" width="2" height="2" fill="#c42733"/><rect x="26" y="27" width="2" height="2" fill="#af2d36"/><rect x="27" y="27" width="2" height="2" fill="#8f323a"/><rect x="28" y="27" width="2" height="2" fill="#64363d"/><rect x="29" y="27" width="2" height="2" fill="#303840"/><rect x="30" y="27" width="2" height="2" fill="#d02030"/><rect x="31" y="27" width="2" height="2" fill="#c42733"/><rect x="32" y="27" width="2" height="2" fill="#af2d36"/><rect x="33" y="27" width="2" height="2" fill="#8f323a"/><rect x="34" y="27" width="2" height="2" fill="#64363d"/><rect x="35" y="27" width="2" height="2" fill="#505050"/><rect x="36" y="27" width="2" height="2" fill="#505050"/><rect x="37" y="27" width="2" height="2" fill="#a0a0a0"/><rect x="38" y="27" width="2" height="2" fill="#acacac"/><rect x="39" y="27" width="2" height="2" fill="#b8b8b8"/><rect x="40" y="27" width="2" height="2" fill="#c4c4c4"/><rect x="41" y="27" width="2" height="2" fill="#d0d0d0"/><rect x="42" y="27" width="2" height="2" fill="#dcdcdc"/><rect x="43" y="27" width="2" height="2" fill="#e8e8e8"/><rect x="44" y="27" width="2" height="2" fill="#f4f4f4"/><rect x="45" y="27" width="2" height="2" fill="#e0c8d0"/><rect x="46" y="27" width="2" height="2" fill="#d09048"/><rect x="47" y="27" width="2" height="2" fill="#90c0c0"/><rect x="48" y="27" width="2" height="2" fill="#3898d0"/><rect x="0" y="28" width="2" height="2" fill="#ca508a"/><rect x="1" y="28" width="2" height="2" fill="#bc558f"/><rect x="2" y="28" width="2" height="2" fill="#a65995"/><rect x="3" y="28" width="2" height="2" fill="#855b9a"/><rect x="4" y="28" width="2" height="2" fill="#5a5b9e"/><rect x="5" y="28" width="2" height="2" fill="#265aa2"/><rect x="6" y="28" width="2" height="2" fill="#ca508c"/><rect x="7" y="28" width="2" height="2" fill="#bc5591"/><rect x="8" y="28" width="2" height="2" fill="#a65996"/><rect x="9" y="28" width="2" height="2" fill="#855b9b"/><rect x="10" y="28" width="2" height="2" fill="#5a5b9f"/><rect x="11" y="28" width="2" height="2" fill="#265aa3"/><rect x="12" y="28" width="2" height="2" fill="#ca5075"/><rect x="13" y="28" width="2" height="2" fill="#bc567d"/><rect x="14" y="28" width="2" height="2" fill="#a65985"/><rect x="15" y="28" width="2" height="2" fill="#855a8c"/><rect x="16" y="28" width="2" height="2" fill="#5a5992"/><rect x="17" y="28" width="2" height="2" fill="#265497"/><rect x="18" y="28" width="2" height="2" fill="#ca4f6a"/><rect x="19" y="28" width="2" height="2" fill="#bc536f"/><rect x="20" y="28" width="2" height="2" fill="#a55573"/><rect x="21" y="28" width="2" height="2" fill="#855677"/><rect x="22" y="28" width="2" height="2" fill="#5b567b"/><rect x="23" y="28" width="2" height="2" fill="#275480"/><rect x="24" y="28" width="2" height="2" fill="#d65236"/><rect x="25" y="28" width="2" height="2" fill="#c85537"/><rect x="26" y="28" width="2" height="2" fill="#ae573a"/><rect x="27" y="28" width="2" height="2" fill="#8b573c"/><rect x="28" y="28" width="2" height="2" fill="#5e5640"/><rect x="29" y="28" width="2" height="2" fill="#265444"/><rect x="30" y="28" width="2" height="2" fill="#d65236"/><rect x="31" y="28" width="2" height="2" fill="#c85537"/><rect x="32" y="28" width="2" height="2" fill="#ae573a"/><rect x="33" y="28" width="2" height="2" fill="#8b573c"/><rect x="34" y="28" width="2" height="2" fill="#5e5640"/><rect x="35" y="28" width="2" height="2" fill="#505050"/><rect x="36" y="28" width="2" height="2" fill="#505050"/><rect x="37" y="28" width="2" height="2" fill="#a8a8a8"/><rect x="38" y="28" width="2" height="2" fill="#b4b4b4"/><rect x="39" y="28" width="2" height="2" fill="#c0c0c0"/><rect x="40" y="28" width="2" height="2" fill="#cccccc"/><rect x="41" y="28" width="2" height="2" fill="#d8d8d8"/><rect x="42" y="28" width="2" height="2" fill="#e4e4e4"/><rect x="43" y="28" width="2" height="2" fill="#f0f0f0"/><rect x="44" y="28" width="2" height="2" fill="#fcfcfc"/><rect x="45" y="28" width="2" height="2" fill="#e8c0b8"/><rect x="46" y="28" width="2" height="2" fill="#c058a0"/><rect x="47" y="28" width="2" height="2" fill="#98c0b0"/><rect x="48" y="28" width="2" height="2" fill="#3890c8"/><rect x="0" y="29" width="2" height="2" fill="#d37ca3"/><rect x="1" y="29" width="2" height="2" fill="#c57fa7"/><rect x="2" y="29" width="2" height="2" fill="#ad80ab"/><rect x="3" y="29" width="2" height="2" fill="#8a7eaf"/><rect x="4" y="29" width="2" height="2" fill="#5e7bb3"/><rect x="5" y="29" width="2" height="2" fill="#2775b7"/><rect x="6" y="29" width="2" height="2" fill="#d37ca4"/><rect x="7" y="29" width="2" height="2" fill="#c57fa8"/><rect x="8" y="29" width="2" height="2" fill="#ad80ac"/><rect x="9" y="29" width="2" height="2" fill="#8a7eb0"/><rect x="10" y="29" width="2" height="2" fill="#5e7bb4"/><rect x="11" y="29" width="2" height="2" fill="#2775b8"/><rect x="12" y="29" width="2" height="2" fill="#d37c8c"/><rect x="13" y="29" width="2" height="2" fill="#c58094"/><rect x="14" y="29" width="2" height="2" fill="#ad809b"/><rect x="15" y="29" width="2" height="2" fill="#8a7da1"/><rect x="16" y="29" width="2" height="2" fill="#5e77a5"/><rect x="17" y="29" width="2" height="2" fill="#276da9"/><rect x="18" y="29" width="2" height="2" fill="#d37c7e"/><rect x="19" y="29" width="2" height="2" fill="#c57b82"/><rect x="20" y="29" width="2" height="2" fill="#ad7a86"/><rect x="21" y="29" width="2" height="2" fill="#8a7789"/><rect x="22" y="29" width="2" height="2" fill="#5e738b"/><rect x="23" y="29" width="2" height="2" fill="#276d8c"/><rect x="24" y="29" width="2" height="2" fill="#dd7d34"/><rect x="25" y="29" width="2" height="2" fill="#cc7c35"/><rect x="26" y="29" width="2" height="2" fill="#b07a38"/><rect x="27" y="29" width="2" height="2" fill="#8b773c"/><rect x="28" y="29" width="2" height="2" fill="#5b7341"/><rect x="29" y="29" width="2" height="2" fill="#216d47"/><rect x="30" y="29" width="2" height="2" fill="#dd7d34"/><rect x="31" y="29" width="2" height="2" fill="#cc7c35"/><rect x="32" y="29" width="2" height="2" fill="#b07a38"/><rect x="33" y="29" width="2" height="2" fill="#8b773c"/><rect x="34" y="29" width="2" height="2" fill="#5b7341"/><rect x="35" y="29" width="2" height="2" fill="#505050"/><rect x="36" y="29" width="2" height="2" fill="#505050"/><rect x="37" y="29" width="2" height="2" fill="#b0b0b0"/><rect x="38" y="29" width="2" height="2" fill="#bcbcbc"/><rect x="39" y="29" width="2" height="2" fill="#c8c8c8"/><rect x="40" y="29" width="2" height="2" fill="#d4d4d4"/><rect x="41" y="29" width="2" height="2" fill="#e0e0e0"/><rect x="42" y="29" width="2" height="2" fill="#ececec"/><rect x="43" y="29" width="2" height="2" fill="#f8f8f8"/><rect x="44" y="29" width="2" height="2" fill="#ffffff"/><rect x="45" y="29" width="2" height="2" fill="#e8c898"/><rect x="46" y="29" width="2" height="2" fill="#c05898"/><rect x="47" y="29" width="2" height="2" fill="#a0c060"/><rect x="48" y="29" width="2" height="2" fill="#3890c8"/><rect x="0" y="30" width="2" height="2" fill="#dda4bd"/><rect x="1" y="30" width="2" height="2" fill="#cda4bf"/><rect x="2" y="30" width="2" height="2" fill="#b4a2c1"/><rect x="3" y="30" width="2" height="2" fill="#909cc3"/><rect x="4" y="30" width="2" height="2" fill="#6294c5"/><rect x="5" y="30" width="2" height="2" fill="#2a8ac7"/><rect x="6" y="30" width="2" height="2" fill="#dda4bb"/><rect x="7" y="30" width="2" height="2" fill="#cda4be"/><rect x="8" y="30" width="2" height="2" fill="#b4a2c0"/><rect x="9" y="30" width="2" height="2" fill="#909cc2"/><rect x="10" y="30" width="2" height="2" fill="#6294c5"/><rect x="11" y="30" width="2" height="2" fill="#2a8ac6"/><rect x="12" y="30" width="2" height="2" fill="#dda4a4"/><rect x="13" y="30" width="2" height="2" fill="#cda5aa"/><rect x="14" y="30" width="2" height="2" fill="#b4a2af"/><rect x="15" y="30" width="2" height="2" fill="#909bb3"/><rect x="16" y="30" width="2" height="2" fill="#6291b5"/><rect x="17" y="30" width="2" height="2" fill="#2a82b6"/><rect x="18" y="30" width="2" height="2" fill="#dda393"/><rect x="19" y="30" width="2" height="2" fill="#ce9f96"/><rect x="20" y="30" width="2" height="2" fill="#b49a97"/><rect x="21" y="30" width="2" height="2" fill="#909398"/><rect x="22" y="30" width="2" height="2" fill="#628b96"/><rect x="23" y="30" width="2" height="2" fill="#298294"/><rect x="24" y="30" width="2" height="2" fill="#e3a22a"/><rect x="25" y="30" width="2" height="2" fill="#d19e2e"/><rect x="26" y="30" width="2" height="2" fill="#b49932"/><rect x="27" y="30" width="2" height="2" fill="#8d9238"/><rect x="28" y="30" width="2" height="2" fill="#5c8b40"/><rect x="29" y="30" width="2" height="2" fill="#218249"/><rect x="30" y="30" width="2" height="2" fill="#e3a22a"/><rect x="31" y="30" width="2" height="2" fill="#d19e2e"/><rect x="32" y="30" width="2" height="2" fill="#b49932"/><rect x="33" y="30" width="2" height="2" fill="#8d9238"/><rect x="34" y="30" width="2" height="2" fill="#5c8b40"/><rect x="35" y="30" width="2" height="2" fill="#222222"/><rect x="36" y="30" width="2" height="2" fill="#222222"/><rect x="37" y="30" width="2" height="2" fill="#222222"/><rect x="38" y="30" width="2" height="2" fill="#222222"/><rect x="39" y="30" width="2" height="2" fill="#222222"/><rect x="40" y="30" width="2" height="2" fill="#222222"/><rect x="41" y="30" width="2" height="2" fill="#222222"/><rect x="42" y="30" width="2" height="2" fill="#222222"/><rect x="43" y="30" width="2" height="2" fill="#222222"/><rect x="44" y="30" width="2" height="2" fill="#222222"/><rect x="45" y="30" width="2" height="2" fill="#e8c050"/><rect x="46" y="30" width="2" height="2" fill="#c05888"/><rect x="47" y="30" width="2" height="2" fill="#90b8e0"/><rect x="48" y="30" width="2" height="2" fill="#389088"/><rect x="0" y="31" width="2" height="2" fill="#e6c8d6"/><rect x="1" y="31" width="2" height="2" fill="#d5c5d6"/><rect x="2" y="31" width="2" height="2" fill="#bbbfd6"/><rect x="3" y="31" width="2" height="2" fill="#96b5d5"/><rect x="4" y="31" width="2" height="2" fill="#68a8d4"/><rect x="5" y="31" width="2" height="2" fill="#3098d2"/><rect x="6" y="31" width="2" height="2" fill="#e6c8cf"/><rect x="7" y="31" width="2" height="2" fill="#d5c5d1"/><rect x="8" y="31" width="2" height="2" fill="#bbbfd2"/><rect x="9" y="31" width="2" height="2" fill="#96b5d2"/><rect x="10" y="31" width="2" height="2" fill="#68a8d1"/><rect x="11" y="31" width="2" height="2" fill="#3098ce"/><rect x="12" y="31" width="2" height="2" fill="#e6c8bd"/><rect x="13" y="31" width="2" height="2" fill="#d5c5c0"/><rect x="14" y="31" width="2" height="2" fill="#bbbfc2"/><rect x="15" y="31" width="2" height="2" fill="#96b4c2"/><rect x="16" y="31" width="2" height="2" fill="#68a6c0"/><rect x="17" y="31" width="2" height="2" fill="#3093bd"/><rect x="18" y="31" width="2" height="2" fill="#e6c4a9"/><rect x="19" y="31" width="2" height="2" fill="#d6bea8"/><rect x="20" y="31" width="2" height="2" fill="#bbb6a7"/><rect x="21" y="31" width="2" height="2" fill="#96aca3"/><rect x="22" y="31" width="2" height="2" fill="#66a09e"/><rect x="23" y="31" width="2" height="2" fill="#2c9398"/><rect x="24" y="31" width="2" height="2" fill="#eac019"/><rect x="25" y="31" width="2" height="2" fill="#d7ba20"/><rect x="26" y="31" width="2" height="2" fill="#bab228"/><rect x="27" y="31" width="2" height="2" fill="#93a931"/><rect x="28" y="31" width="2" height="2" fill="#619e3c"/><rect x="29" y="31" width="2" height="2" fill="#269349"/><rect x="30" y="31" width="2" height="2" fill="#eac019"/><rect x="31" y="31" width="2" height="2" fill="#d7ba20"/><rect x="32" y="31" width="2" height="2" fill="#bab228"/><rect x="33" y="31" width="2" height="2" fill="#93a931"/><rect x="34" y="31" width="2" height="2" fill="#619e3c"/><rect x="35" y="31" width="2" height="2" fill="#222222"/><rect x="36" y="31" width="2" height="2" fill="#222222"/><rect x="37" y="31" width="2" height="2" fill="#222222"/><rect x="38" y="31" width="2" height="2" fill="#222222"/><rect x="39" y="31" width="2" height="2" fill="#222222"/><rect x="40" y="31" width="2" height="2" fill="#222222"/><rect x="41" y="31" width="2" height="2" fill="#222222"/><rect x="42" y="31" width="2" height="2" fill="#222222"/><rect x="43" y="31" width="2" height="2" fill="#222222"/><rect x="44" y="31" width="2" height="2" fill="#222222"/><rect x="45" y="31" width="2" height="2" fill="#d8b0d0"/><rect x="46" y="31" width="2" height="2" fill="#c06878"/><rect x="47" y="31" width="2" height="2" fill="#90b8e0"/><rect x="48" y="31" width="2" height="2" fill="#389080"/><rect x="0" y="32" width="2" height="2" fill="#f0e8f0"/><rect x="1" y="32" width="2" height="2" fill="#dde1ee"/><rect x="2" y="32" width="2" height="2" fill="#c1d7ea"/><rect x="3" y="32" width="2" height="2" fill="#9cc8e5"/><rect x="4" y="32" width="2" height="2" fill="#6fb6df"/><rect x="5" y="32" width="2" height="2" fill="#38a0d8"/><rect x="6" y="32" width="2" height="2" fill="#f0e8e0"/><rect x="7" y="32" width="2" height="2" fill="#dde1e2"/><rect x="8" y="32" width="2" height="2" fill="#c1d7e1"/><rect x="9" y="32" width="2" height="2" fill="#9cc8de"/><rect x="10" y="32" width="2" height="2" fill="#6fb6d8"/><rect x="11" y="32" width="2" height="2" fill="#38a0d0"/><rect x="12" y="32" width="2" height="2" fill="#f0e8d8"/><rect x="13" y="32" width="2" height="2" fill="#dde1d6"/><rect x="14" y="32" width="2" height="2" fill="#c1d7d2"/><rect x="15" y="32" width="2" height="2" fill="#9cc8cd"/><rect x="16" y="32" width="2" height="2" fill="#6fb6c7"/><rect x="17" y="32" width="2" height="2" fill="#38a0c0"/><rect x="18" y="32" width="2" height="2" fill="#f0e0c0"/><rect x="19" y="32" width="2" height="2" fill="#ded8bb"/><rect x="20" y="32" width="2" height="2" fill="#c2ceb4"/><rect x="21" y="32" width="2" height="2" fill="#9cc1ac"/><rect x="22" y="32" width="2" height="2" fill="#6bb2a3"/><rect x="23" y="32" width="2" height="2" fill="#30a098"/><rect x="24" y="32" width="2" height="2" fill="#f0d800"/><rect x="25" y="32" width="2" height="2" fill="#decf0c"/><rect x="26" y="32" width="2" height="2" fill="#c2c519"/><rect x="27" y="32" width="2" height="2" fill="#9cba27"/><rect x="28" y="32" width="2" height="2" fill="#6bae37"/><rect x="29" y="32" width="2" height="2" fill="#30a048"/><rect x="30" y="32" width="2" height="2" fill="#f0d800"/><rect x="31" y="32" width="2" height="2" fill="#decf0c"/><rect x="32" y="32" width="2" height="2" fill="#c2c519"/><rect x="33" y="32" width="2" height="2" fill="#9cba27"/><rect x="34" y="32" width="2" height="2" fill="#6bae37"/><rect x="35" y="32" width="2" height="2" fill="#222222"/><rect x="36" y="32" width="2" height="2" fill="#222222"/><rect x="37" y="32" width="2" height="2" fill="#222222"/><rect x="38" y="32" width="2" height="2" fill="#222222"/><rect x="39" y="32" width="2" height="2" fill="#222222"/><rect x="40" y="32" width="2" height="2" fill="#222222"/><rect x="41" y="32" width="2" height="2" fill="#222222"/><rect x="42" y="32" width="2" height="2" fill="#222222"/><rect x="43" y="32" width="2" height="2" fill="#222222"/><rect x="44" y="32" width="2" height="2" fill="#222222"/><rect x="45" y="32" width="2" height="2" fill="#e4e0ec"/><rect x="46" y="32" width="2" height="2" fill="#d8c898"/><rect x="47" y="32" width="2" height="2" fill="#c098b8"/><rect x="48" y="32" width="2" height="2" fill="#a05040"/></g></svg><svg class="a" style="left:436.6px;top:37.8px" width="105.84" height="71.50" viewBox="0 0 49 33" preserveAspectRatio="none"><use href="#th"/></svg><div class="a" style="left:3px;top:118.5px;width:649px;height:3.5px;background:#fafafa"></div><div class="a" style="left:325.5px;top:119.3px;width:2px;height:2px;border-radius:50%;background:#9a9a9a"></div><div class="a" style="left:9.5px;top:133.7px;width:635px;height:304px;background:#e3e3e3;box-shadow:0 0 0 0.5px #d4d4d4"></div><div class="a" style="left:273.5px;top:129px;width:107px;height:10.8px;background:#fff;border-radius:1.8px;box-shadow:0 0 0 0.5px #c4c4c4,0 0.5px 1px rgba(0,0,0,.15)"></div><div class="a" style="left:273.5px;top:129px;width:35px;height:10.8px;background:linear-gradient(#4a8ef5,#2d6fe8);border-radius:1.8px 0 0 1.8px"></div><div class="t" style="left:273.5px;top:130px;width:35px;text-align:center;color:#fff">Farben</div><div class="t" style="left:308.5px;top:130px;width:32.5px;text-align:center">Graph</div><div class="t" style="left:341px;top:130px;width:40px;text-align:center">Statistik</div><div class="a" style="left:13.6px;top:164.2px;width:54.2px;height:53.6px;background:#e1c300"></div><div class="t" style="left:74.3px;top:147.5px">Vergleichsmodus:</div><div class="pop" style="left:139px;top:146.1px;width:294px;height:9.8px"></div><div class="step" style="left:424.4px;top:145.8px;width:9px;height:11px"></div><div class="t" style="left:143.5px;top:147.2px;font-size:7.4px">Delta-Auto</div><div class="cb" style="left:440.5px;top:147.5px"></div><div class="t" style="left:449.6px;top:147.2px">Sort</div><div class="cb" style="left:472.3px;top:147.5px"></div><div class="t" style="left:481.5px;top:147.2px">Zeige Differenzen</div><div class="cb on" style="left:547.8px;top:147.5px"></div><div class="t" style="left:557.1px;top:147.2px">Chart an Breite anpassen</div><div class="t" style="left:83.8px;top:164.2px">Markieren von:</div><div class="a" style="left:140.6px;top:167.3px;width:466px;height:1.5px;background:#b8b8b8;border-radius:1px"></div><div class="a" style="left:140.6px;top:167.3px;width:302px;height:1.5px;background:#3a82f0;border-radius:1px"></div><div class="a" style="left:439.4px;top:164.4px;width:7.6px;height:7.6px;border-radius:50%;background:#fff;box-shadow:0 0 0 0.5px #b0b0b0,0 0.5px 1px rgba(0,0,0,.25)"></div><div class="a" style="left:614.5px;top:163.2px;width:25.7px;height:11px;background:#fff;box-shadow:0 0 0 0.5px #d6d6d6,0 0.5px 0.6px rgba(0,0,0,.1)"></div><div class="t" style="left:617px;top:164.5px">30</div><div class="t" style="left:86.6px;top:181px">Markieren bis:</div><div class="a" style="left:140.6px;top:184.5px;width:466px;height:1.5px;background:#b8b8b8;border-radius:1px"></div><div class="a" style="left:140.6px;top:184.5px;width:212px;height:1.5px;background:#3a82f0;border-radius:1px"></div><div class="a" style="left:349.6px;top:181.7px;width:7.6px;height:7.6px;border-radius:50%;background:#fff;box-shadow:0 0 0 0.5px #b0b0b0,0 0.5px 1px rgba(0,0,0,.25)"></div><div class="a" style="left:614.5px;top:180.3px;width:25.7px;height:11px;background:#fff;box-shadow:0 0 0 0.5px #d6d6d6,0 0.5px 0.6px rgba(0,0,0,.1)"></div><div class="t" style="left:617px;top:181.6px">3</div><div class="cb" style="left:102.6px;top:195.9px"></div><div class="t" style="left:112.2px;top:195.0px">Weiß</div><div class="cb" style="left:136.2px;top:195.9px"></div><div class="t" style="left:146.5px;top:195.0px">Schwarz</div><div class="cb" style="left:182.2px;top:195.9px"></div><div class="t" style="left:191.5px;top:195.0px">Volltöne</div><div class="cb" style="left:226.7px;top:195.9px"></div><div class="t" style="left:236.3px;top:195.0px">Primärfarben</div><div class="cb" style="left:287.0px;top:195.9px"></div><div class="t" style="left:296.2px;top:195.0px">Sekundärfarben</div><div class="cb" style="left:357.3px;top:195.9px"></div><div class="t" style="left:367.2px;top:195.0px">2C</div><div class="cb" style="left:385.0px;top:195.9px"></div><div class="t" style="left:393.5px;top:195.0px">3C</div><div class="cb" style="left:412.6px;top:195.9px"></div><div class="t" style="left:420.6px;top:195.0px">4C</div><div class="cb" style="left:438.6px;top:195.9px"></div><div class="t" style="left:447.2px;top:195.0px">5C</div><div class="cb" style="left:465.4px;top:195.9px"></div><div class="t" style="left:474.0px;top:195.0px">6C</div><div class="cb" style="left:492.5px;top:195.9px"></div><div class="t" style="left:501.5px;top:195.0px">1C+K</div><div class="cb" style="left:527.9px;top:195.9px"></div><div class="t" style="left:536.5px;top:195.0px">2C+K</div><div class="cb" style="left:563.3px;top:195.9px"></div><div class="t" style="left:572.6px;top:195.0px">Grenzwerte</div><div class="cb on" style="left:283.2px;top:208.0px"></div><div class="t" style="left:293.5px;top:207.1px">Cyan</div><div class="cb on" style="left:318.3px;top:208.0px"></div><div class="t" style="left:327.9px;top:207.1px">Magenta</div><div class="cb on" style="left:364.1px;top:208.0px"></div><div class="t" style="left:373.7px;top:207.1px">Yellow</div><div class="cb on" style="left:403.0px;top:208.0px"></div><div class="t" style="left:411.8px;top:207.1px">Black</div><div class="t" style="left:75.5px;top:222.1px;font-size:5.8px;line-height:7px">635:</div><div class="t" style="left:89.1px;top:222.1px;font-size:5.4px;line-height:7px">Lab</div><div class="t" style="left:100.3px;top:222.1px;font-size:5.4px;line-height:7px">=</div><div class="t" style="left:105.3px;top:222.1px;font-size:5.8px;line-height:7px">80.46</div><div class="t" style="left:123.8px;top:222.1px;font-size:5.8px;line-height:7px">-2.30</div><div class="t" style="left:141.4px;top:222.1px;font-size:5.8px;line-height:7px">80.35</div><div class="t" style="left:158.2px;top:222.1px;font-size:5.4px;line-height:7px">/</div><div class="t" style="left:162.0px;top:222.1px;font-size:5.8px;line-height:7px">80.40</div><div class="t" style="left:180.7px;top:222.1px;font-size:5.8px;line-height:7px">-2.22</div><div class="t" style="left:197.5px;top:222.1px;font-size:5.8px;line-height:7px">80.45</div><div class="t" style="left:215.4px;top:222.1px;font-size:5.4px;line-height:7px">/</div><div class="t" style="left:217.7px;top:222.1px;font-size:5.4px;line-height:7px">dE76</div><div class="t" style="left:232.9px;top:222.1px;font-size:5.4px;line-height:7px">=</div><div class="t" style="left:239.4px;top:222.1px;font-size:5.8px;line-height:7px">0.14</div><div class="t" style="left:83.5px;top:229.1px;font-size:5.2px;line-height:7px">CMYK</div><div class="t" style="left:99.9px;top:229.1px;font-size:5.2px;line-height:7px">=</div><div class="t" style="left:107.6px;top:229.1px;font-size:5.8px;line-height:7px">10.0</div><div class="t" style="left:121.5px;top:229.1px;font-size:5.8px;line-height:7px">10.0</div><div class="t" style="left:133.7px;top:229.1px;font-size:5.8px;line-height:7px">100.0</div><div class="t" style="left:152.8px;top:229.1px;font-size:5.8px;line-height:7px">0.0</div><div class="t" style="left:162.7px;top:229.1px;font-size:5.2px;line-height:7px">/</div><div class="t" style="left:167.0px;top:229.1px;font-size:5.2px;line-height:7px">CMYK</div><div class="t" style="left:184.9px;top:229.1px;font-size:5.2px;line-height:7px">=</div><div class="t" style="left:191.7px;top:229.1px;font-size:5.8px;line-height:7px">10.0</div><div class="t" style="left:204.7px;top:229.1px;font-size:5.8px;line-height:7px">10.0</div><div class="t" style="left:217.3px;top:229.1px;font-size:5.8px;line-height:7px">100.0</div><div class="t" style="left:236.0px;top:229.1px;font-size:5.8px;line-height:7px">0.0</div><svg class="a" style="left:13.6px;top:242.8px" width="610.05" height="189.20" viewBox="0 0 49 15.1968" preserveAspectRatio="none" shape-rendering="crispEdges"><rect x="0" y="0" width="2" height="2" fill="#e01e6a"/><rect x="1" y="0" width="2" height="2" fill="#d81e6e"/><rect x="2" y="0" width="2" height="2" fill="#d01e70"/><rect x="3" y="0" width="2" height="2" fill="#c81e74"/><rect x="4" y="0" width="2" height="2" fill="#b82078"/><rect x="5" y="0" width="2" height="2" fill="#a02880"/><rect x="6" y="0" width="2" height="2" fill="#803080"/><rect x="7" y="0" width="2" height="2" fill="#583888"/><rect x="8" y="0" width="2" height="2" fill="#2e3c88"/><rect x="9" y="0" width="2" height="2" fill="#d81c50"/><rect x="10" y="0" width="2" height="2" fill="#d81c50"/><rect x="11" y="0" width="2" height="2" fill="#d01c50"/><rect x="12" y="0" width="2" height="2" fill="#c02058"/><rect x="13" y="0" width="2" height="2" fill="#b02858"/><rect x="14" y="0" width="2" height="2" fill="#983060"/><rect x="15" y="0" width="2" height="2" fill="#803060"/><rect x="16" y="0" width="2" height="2" fill="#603868"/><rect x="17" y="0" width="2" height="2" fill="#383c78"/><rect x="18" y="0" width="2" height="2" fill="#e01830"/><rect x="19" y="0" width="2" height="2" fill="#d81c30"/><rect x="20" y="0" width="2" height="2" fill="#d01c30"/><rect x="21" y="0" width="2" height="2" fill="#c02030"/><rect x="22" y="0" width="2" height="2" fill="#b02838"/><rect x="23" y="0" width="2" height="2" fill="#a02838"/><rect x="24" y="0" width="2" height="2" fill="#803038"/><rect x="25" y="0" width="2" height="2" fill="#603438"/><rect x="26" y="0" width="2" height="2" fill="#383838"/><rect x="27" y="0" width="2" height="2" fill="#a71e2e"/><rect x="28" y="0" width="2" height="2" fill="#981e2e"/><rect x="29" y="0" width="2" height="2" fill="#90262e"/><rect x="30" y="0" width="2" height="2" fill="#603038"/><rect x="31" y="0" width="2" height="2" fill="#204038"/><rect x="32" y="0" width="2" height="2" fill="#901e26"/><rect x="33" y="0" width="2" height="2" fill="#811e26"/><rect x="34" y="0" width="2" height="2" fill="#7a2626"/><rect x="35" y="0" width="2" height="2" fill="#483030"/><rect x="36" y="0" width="2" height="2" fill="#303030"/><rect x="37" y="0" width="2" height="2" fill="#502030"/><rect x="38" y="0" width="2" height="2" fill="#482030"/><rect x="39" y="0" width="2" height="2" fill="#382838"/><rect x="40" y="0" width="2" height="2" fill="#203040"/><rect x="41" y="0" width="2" height="2" fill="#502020"/><rect x="42" y="0" width="2" height="2" fill="#402820"/><rect x="43" y="0" width="2" height="2" fill="#302820"/><rect x="44" y="0" width="2" height="2" fill="#282828"/><rect x="45" y="0" width="2" height="2" fill="#e4e0ec"/><rect x="46" y="0" width="2" height="2" fill="#d8c898"/><rect x="47" y="0" width="2" height="2" fill="#c098b8"/><rect x="48" y="0" width="2" height="2" fill="#a05040"/><rect x="0" y="1" width="2" height="2" fill="#e04078"/><rect x="1" y="1" width="2" height="2" fill="#d84080"/><rect x="2" y="1" width="2" height="2" fill="#d04080"/><rect x="3" y="1" width="2" height="2" fill="#c84080"/><rect x="4" y="1" width="2" height="2" fill="#b04888"/><rect x="5" y="1" width="2" height="2" fill="#985088"/><rect x="6" y="1" width="2" height="2" fill="#805088"/><rect x="7" y="1" width="2" height="2" fill="#585088"/><rect x="8" y="1" width="2" height="2" fill="#304c90"/><rect x="9" y="1" width="2" height="2" fill="#e04860"/><rect x="10" y="1" width="2" height="2" fill="#d84860"/><rect x="11" y="1" width="2" height="2" fill="#d04860"/><rect x="12" y="1" width="2" height="2" fill="#c04860"/><rect x="13" y="1" width="2" height="2" fill="#b04860"/><rect x="14" y="1" width="2" height="2" fill="#985068"/><rect x="15" y="1" width="2" height="2" fill="#804868"/><rect x="16" y="1" width="2" height="2" fill="#604870"/><rect x="17" y="1" width="2" height="2" fill="#304878"/><rect x="18" y="1" width="2" height="2" fill="#e04828"/><rect x="19" y="1" width="2" height="2" fill="#d84828"/><rect x="20" y="1" width="2" height="2" fill="#d04828"/><rect x="21" y="1" width="2" height="2" fill="#c04830"/><rect x="22" y="1" width="2" height="2" fill="#b04830"/><rect x="23" y="1" width="2" height="2" fill="#984838"/><rect x="24" y="1" width="2" height="2" fill="#784838"/><rect x="25" y="1" width="2" height="2" fill="#504840"/><rect x="26" y="1" width="2" height="2" fill="#284848"/><rect x="27" y="1" width="2" height="2" fill="#a35124"/><rect x="28" y="1" width="2" height="2" fill="#964c28"/><rect x="29" y="1" width="2" height="2" fill="#8a4b2b"/><rect x="30" y="1" width="2" height="2" fill="#584830"/><rect x="31" y="1" width="2" height="2" fill="#185838"/><rect x="32" y="1" width="2" height="2" fill="#884921"/><rect x="33" y="1" width="2" height="2" fill="#794425"/><rect x="34" y="1" width="2" height="2" fill="#6d4228"/><rect x="35" y="1" width="2" height="2" fill="#404030"/><rect x="36" y="1" width="2" height="2" fill="#204030"/><rect x="37" y="1" width="2" height="2" fill="#503838"/><rect x="38" y="1" width="2" height="2" fill="#483840"/><rect x="39" y="1" width="2" height="2" fill="#383848"/><rect x="40" y="1" width="2" height="2" fill="#204050"/><rect x="41" y="1" width="2" height="2" fill="#583828"/><rect x="42" y="1" width="2" height="2" fill="#403820"/><rect x="43" y="1" width="2" height="2" fill="#303020"/><rect x="44" y="1" width="2" height="2" fill="#203020"/><rect x="45" y="1" width="2" height="2" fill="#e8e4ec"/><rect x="46" y="1" width="2" height="2" fill="#e0c050"/><rect x="47" y="1" width="2" height="2" fill="#c898a8"/><rect x="48" y="1" width="2" height="2" fill="#48a8d8"/><rect x="0" y="2" width="2" height="2" fill="#e06088"/><rect x="1" y="2" width="2" height="2" fill="#d86090"/><rect x="2" y="2" width="2" height="2" fill="#d06090"/><rect x="3" y="2" width="2" height="2" fill="#c06090"/><rect x="4" y="2" width="2" height="2" fill="#b06898"/><rect x="5" y="2" width="2" height="2" fill="#986898"/><rect x="6" y="2" width="2" height="2" fill="#806898"/><rect x="7" y="2" width="2" height="2" fill="#506098"/><rect x="8" y="2" width="2" height="2" fill="#2858a0"/><rect x="9" y="2" width="2" height="2" fill="#e06060"/><rect x="10" y="2" width="2" height="2" fill="#d86068"/><rect x="11" y="2" width="2" height="2" fill="#d06068"/><rect x="12" y="2" width="2" height="2" fill="#c06068"/><rect x="13" y="2" width="2" height="2" fill="#b06068"/><rect x="14" y="2" width="2" height="2" fill="#985868"/><rect x="15" y="2" width="2" height="2" fill="#805868"/><rect x="16" y="2" width="2" height="2" fill="#505870"/><rect x="17" y="2" width="2" height="2" fill="#205878"/><rect x="18" y="2" width="2" height="2" fill="#e05820"/><rect x="19" y="2" width="2" height="2" fill="#d85820"/><rect x="20" y="2" width="2" height="2" fill="#d05820"/><rect x="21" y="2" width="2" height="2" fill="#c05828"/><rect x="22" y="2" width="2" height="2" fill="#b05828"/><rect x="23" y="2" width="2" height="2" fill="#985830"/><rect x="24" y="2" width="2" height="2" fill="#785830"/><rect x="25" y="2" width="2" height="2" fill="#505840"/><rect x="26" y="2" width="2" height="2" fill="#205848"/><rect x="27" y="2" width="2" height="2" fill="#a2781d"/><rect x="28" y="2" width="2" height="2" fill="#947124"/><rect x="29" y="2" width="2" height="2" fill="#86692a"/><rect x="30" y="2" width="2" height="2" fill="#4a6838"/><rect x="31" y="2" width="2" height="2" fill="#107040"/><rect x="32" y="2" width="2" height="2" fill="#85691c"/><rect x="33" y="2" width="2" height="2" fill="#776222"/><rect x="34" y="2" width="2" height="2" fill="#685a29"/><rect x="35" y="2" width="2" height="2" fill="#386030"/><rect x="36" y="2" width="2" height="2" fill="#106038"/><rect x="37" y="2" width="2" height="2" fill="#605050"/><rect x="38" y="2" width="2" height="2" fill="#505050"/><rect x="39" y="2" width="2" height="2" fill="#384858"/><rect x="40" y="2" width="2" height="2" fill="#184858"/><rect x="41" y="2" width="2" height="2" fill="#605028"/><rect x="42" y="2" width="2" height="2" fill="#404828"/><rect x="43" y="2" width="2" height="2" fill="#304020"/><rect x="44" y="2" width="2" height="2" fill="#104028"/><rect x="45" y="2" width="2" height="2" fill="#e8e0e4"/><rect x="46" y="2" width="2" height="2" fill="#d0c0e0"/><rect x="47" y="2" width="2" height="2" fill="#d09890"/><rect x="48" y="2" width="2" height="2" fill="#40a0d0"/><rect x="0" y="3" width="2" height="2" fill="#e08098"/><rect x="1" y="3" width="2" height="2" fill="#d880a0"/><rect x="2" y="3" width="2" height="2" fill="#d080a0"/><rect x="3" y="3" width="2" height="2" fill="#c080a8"/><rect x="4" y="3" width="2" height="2" fill="#b088a8"/><rect x="5" y="3" width="2" height="2" fill="#9888a8"/><rect x="6" y="3" width="2" height="2" fill="#7088b0"/><rect x="7" y="3" width="2" height="2" fill="#3878b0"/><rect x="8" y="3" width="2" height="2" fill="#3070b0"/><rect x="9" y="3" width="2" height="2" fill="#e88870"/><rect x="10" y="3" width="2" height="2" fill="#e08870"/><rect x="11" y="3" width="2" height="2" fill="#d08870"/><rect x="12" y="3" width="2" height="2" fill="#c08070"/><rect x="13" y="3" width="2" height="2" fill="#b08070"/><rect x="14" y="3" width="2" height="2" fill="#908078"/><rect x="15" y="3" width="2" height="2" fill="#707878"/><rect x="16" y="3" width="2" height="2" fill="#307880"/><rect x="17" y="3" width="2" height="2" fill="#207888"/><rect x="18" y="3" width="2" height="2" fill="#e88818"/><rect x="19" y="3" width="2" height="2" fill="#e08818"/><rect x="20" y="3" width="2" height="2" fill="#d08820"/><rect x="21" y="3" width="2" height="2" fill="#c08020"/><rect x="22" y="3" width="2" height="2" fill="#b08028"/><rect x="23" y="3" width="2" height="2" fill="#907830"/><rect x="24" y="3" width="2" height="2" fill="#707038"/><rect x="25" y="3" width="2" height="2" fill="#407040"/><rect x="26" y="3" width="2" height="2" fill="#207048"/><rect x="27" y="3" width="2" height="2" fill="#a69417"/><rect x="28" y="3" width="2" height="2" fill="#938c20"/><rect x="29" y="3" width="2" height="2" fill="#84812a"/><rect x="30" y="3" width="2" height="2" fill="#388838"/><rect x="31" y="3" width="2" height="2" fill="#107840"/><rect x="32" y="3" width="2" height="2" fill="#888116"/><rect x="33" y="3" width="2" height="2" fill="#7a791f"/><rect x="34" y="3" width="2" height="2" fill="#6c7029"/><rect x="35" y="3" width="2" height="2" fill="#307038"/><rect x="36" y="3" width="2" height="2" fill="#106838"/><rect x="37" y="3" width="2" height="2" fill="#606858"/><rect x="38" y="3" width="2" height="2" fill="#506858"/><rect x="39" y="3" width="2" height="2" fill="#306060"/><rect x="40" y="3" width="2" height="2" fill="#106068"/><rect x="41" y="3" width="2" height="2" fill="#686828"/><rect x="42" y="3" width="2" height="2" fill="#506028"/><rect x="43" y="3" width="2" height="2" fill="#305028"/><rect x="44" y="3" width="2" height="2" fill="#105830"/><rect x="45" y="3" width="2" height="2" fill="#f0e4b8"/><rect x="46" y="3" width="2" height="2" fill="#d0c0d8"/><rect x="47" y="3" width="2" height="2" fill="#d09050"/><rect x="48" y="3" width="2" height="2" fill="#40a0c0"/><rect x="0" y="4" width="2" height="2" fill="#e898a8"/><rect x="1" y="4" width="2" height="2" fill="#d898a8"/><rect x="2" y="4" width="2" height="2" fill="#d098a8"/><rect x="3" y="4" width="2" height="2" fill="#c098b0"/><rect x="4" y="4" width="2" height="2" fill="#b098b0"/><rect x="5" y="4" width="2" height="2" fill="#9090b0"/><rect x="6" y="4" width="2" height="2" fill="#6888b0"/><rect x="7" y="4" width="2" height="2" fill="#3080b0"/><rect x="8" y="4" width="2" height="2" fill="#3078b8"/><rect x="9" y="4" width="2" height="2" fill="#e89070"/><rect x="10" y="4" width="2" height="2" fill="#e09070"/><rect x="11" y="4" width="2" height="2" fill="#d09070"/><rect x="12" y="4" width="2" height="2" fill="#c09078"/><rect x="13" y="4" width="2" height="2" fill="#b09078"/><rect x="14" y="4" width="2" height="2" fill="#909078"/><rect x="15" y="4" width="2" height="2" fill="#708080"/><rect x="16" y="4" width="2" height="2" fill="#287880"/><rect x="17" y="4" width="2" height="2" fill="#287880"/><rect x="18" y="4" width="2" height="2" fill="#e89818"/><rect x="19" y="4" width="2" height="2" fill="#e09818"/><rect x="20" y="4" width="2" height="2" fill="#d09820"/><rect x="21" y="4" width="2" height="2" fill="#c09028"/><rect x="22" y="4" width="2" height="2" fill="#a89030"/><rect x="23" y="4" width="2" height="2" fill="#908830"/><rect x="24" y="4" width="2" height="2" fill="#708038"/><rect x="25" y="4" width="2" height="2" fill="#307840"/><rect x="26" y="4" width="2" height="2" fill="#207848"/><rect x="27" y="4" width="2" height="2" fill="#ada612"/><rect x="28" y="4" width="2" height="2" fill="#929f1e"/><rect x="29" y="4" width="2" height="2" fill="#84912a"/><rect x="30" y="4" width="2" height="2" fill="#309838"/><rect x="31" y="4" width="2" height="2" fill="#107840"/><rect x="32" y="4" width="2" height="2" fill="#90900f"/><rect x="33" y="4" width="2" height="2" fill="#838a1c"/><rect x="34" y="4" width="2" height="2" fill="#768328"/><rect x="35" y="4" width="2" height="2" fill="#208038"/><rect x="36" y="4" width="2" height="2" fill="#106838"/><rect x="37" y="4" width="2" height="2" fill="#501838"/><rect x="38" y="4" width="2" height="2" fill="#482040"/><rect x="39" y="4" width="2" height="2" fill="#382048"/><rect x="40" y="4" width="2" height="2" fill="#202848"/><rect x="41" y="4" width="2" height="2" fill="#502020"/><rect x="42" y="4" width="2" height="2" fill="#402828"/><rect x="43" y="4" width="2" height="2" fill="#302828"/><rect x="44" y="4" width="2" height="2" fill="#282828"/><rect x="45" y="4" width="2" height="2" fill="#e8d858"/><rect x="46" y="4" width="2" height="2" fill="#d8c0c8"/><rect x="47" y="4" width="2" height="2" fill="#c060a0"/><rect x="48" y="4" width="2" height="2" fill="#40a0a0"/><rect x="0" y="5" width="2" height="2" fill="#f0b8b8"/><rect x="1" y="5" width="2" height="2" fill="#e0b0b8"/><rect x="2" y="5" width="2" height="2" fill="#d0b0b8"/><rect x="3" y="5" width="2" height="2" fill="#c0b0c0"/><rect x="4" y="5" width="2" height="2" fill="#b0b0c0"/><rect x="5" y="5" width="2" height="2" fill="#90a8c0"/><rect x="6" y="5" width="2" height="2" fill="#6098c0"/><rect x="7" y="5" width="2" height="2" fill="#3890c0"/><rect x="8" y="5" width="2" height="2" fill="#3888c0"/><rect x="9" y="5" width="2" height="2" fill="#f0b078"/><rect x="10" y="5" width="2" height="2" fill="#e0a878"/><rect x="11" y="5" width="2" height="2" fill="#d0a878"/><rect x="12" y="5" width="2" height="2" fill="#c0a880"/><rect x="13" y="5" width="2" height="2" fill="#b0a080"/><rect x="14" y="5" width="2" height="2" fill="#909880"/><rect x="15" y="5" width="2" height="2" fill="#709080"/><rect x="16" y="5" width="2" height="2" fill="#288888"/><rect x="17" y="5" width="2" height="2" fill="#288888"/><rect x="18" y="5" width="2" height="2" fill="#f0b000"/><rect x="19" y="5" width="2" height="2" fill="#e0a810"/><rect x="20" y="5" width="2" height="2" fill="#d0a818"/><rect x="21" y="5" width="2" height="2" fill="#c0a020"/><rect x="22" y="5" width="2" height="2" fill="#a8a028"/><rect x="23" y="5" width="2" height="2" fill="#909830"/><rect x="24" y="5" width="2" height="2" fill="#709038"/><rect x="25" y="5" width="2" height="2" fill="#309040"/><rect x="26" y="5" width="2" height="2" fill="#208848"/><rect x="27" y="5" width="2" height="2" fill="#af173d"/><rect x="28" y="5" width="2" height="2" fill="#a0173d"/><rect x="29" y="5" width="2" height="2" fill="#901e3d"/><rect x="30" y="5" width="2" height="2" fill="#503858"/><rect x="31" y="5" width="2" height="2" fill="#283850"/><rect x="32" y="5" width="2" height="2" fill="#981735"/><rect x="33" y="5" width="2" height="2" fill="#891735"/><rect x="34" y="5" width="2" height="2" fill="#811e35"/><rect x="35" y="5" width="2" height="2" fill="#483048"/><rect x="36" y="5" width="2" height="2" fill="#302840"/><rect x="37" y="5" width="2" height="2" fill="#503848"/><rect x="38" y="5" width="2" height="2" fill="#483850"/><rect x="39" y="5" width="2" height="2" fill="#383850"/><rect x="40" y="5" width="2" height="2" fill="#203858"/><rect x="41" y="5" width="2" height="2" fill="#503830"/><rect x="42" y="5" width="2" height="2" fill="#403830"/><rect x="43" y="5" width="2" height="2" fill="#303028"/><rect x="44" y="5" width="2" height="2" fill="#203028"/><rect x="45" y="5" width="2" height="2" fill="#e0d8e8"/><rect x="46" y="5" width="2" height="2" fill="#d8c098"/><rect x="47" y="5" width="2" height="2" fill="#c058a0"/><rect x="48" y="5" width="2" height="2" fill="#40a060"/><rect x="0" y="6" width="2" height="2" fill="#f0c8c0"/><rect x="1" y="6" width="2" height="2" fill="#e0c8c8"/><rect x="2" y="6" width="2" height="2" fill="#d0c8c8"/><rect x="3" y="6" width="2" height="2" fill="#c0c0c8"/><rect x="4" y="6" width="2" height="2" fill="#b0c0c8"/><rect x="5" y="6" width="2" height="2" fill="#88b0c8"/><rect x="6" y="6" width="2" height="2" fill="#3898c8"/><rect x="7" y="6" width="2" height="2" fill="#3890c0"/><rect x="8" y="6" width="2" height="2" fill="#3888c8"/><rect x="9" y="6" width="2" height="2" fill="#f0c080"/><rect x="10" y="6" width="2" height="2" fill="#e0c080"/><rect x="11" y="6" width="2" height="2" fill="#d0c080"/><rect x="12" y="6" width="2" height="2" fill="#c0b880"/><rect x="13" y="6" width="2" height="2" fill="#b0b088"/><rect x="14" y="6" width="2" height="2" fill="#90a888"/><rect x="15" y="6" width="2" height="2" fill="#60a088"/><rect x="16" y="6" width="2" height="2" fill="#309888"/><rect x="17" y="6" width="2" height="2" fill="#309088"/><rect x="18" y="6" width="2" height="2" fill="#f0b800"/><rect x="19" y="6" width="2" height="2" fill="#e8b800"/><rect x="20" y="6" width="2" height="2" fill="#d8b410"/><rect x="21" y="6" width="2" height="2" fill="#c0b020"/><rect x="22" y="6" width="2" height="2" fill="#a8b028"/><rect x="23" y="6" width="2" height="2" fill="#90a830"/><rect x="24" y="6" width="2" height="2" fill="#70a038"/><rect x="25" y="6" width="2" height="2" fill="#309848"/><rect x="26" y="6" width="2" height="2" fill="#289048"/><rect x="27" y="6" width="2" height="2" fill="#a75448"/><rect x="28" y="6" width="2" height="2" fill="#994f47"/><rect x="29" y="6" width="2" height="2" fill="#8a4e47"/><rect x="30" y="6" width="2" height="2" fill="#405858"/><rect x="31" y="6" width="2" height="2" fill="#204858"/><rect x="32" y="6" width="2" height="2" fill="#8b4540"/><rect x="33" y="6" width="2" height="2" fill="#7c413f"/><rect x="34" y="6" width="2" height="2" fill="#703f3f"/><rect x="35" y="6" width="2" height="2" fill="#384848"/><rect x="36" y="6" width="2" height="2" fill="#204048"/><rect x="37" y="6" width="2" height="2" fill="#585060"/><rect x="38" y="6" width="2" height="2" fill="#505060"/><rect x="39" y="6" width="2" height="2" fill="#384860"/><rect x="40" y="6" width="2" height="2" fill="#184860"/><rect x="41" y="6" width="2" height="2" fill="#605030"/><rect x="42" y="6" width="2" height="2" fill="#404830"/><rect x="43" y="6" width="2" height="2" fill="#304030"/><rect x="44" y="6" width="2" height="2" fill="#104030"/><rect x="45" y="6" width="2" height="2" fill="#e8d8d0"/><rect x="46" y="6" width="2" height="2" fill="#e0c050"/><rect x="47" y="6" width="2" height="2" fill="#c06090"/><rect x="48" y="6" width="2" height="2" fill="#48a0d8"/><rect x="0" y="7" width="2" height="2" fill="#f0e0d0"/><rect x="1" y="7" width="2" height="2" fill="#e0d8d0"/><rect x="2" y="7" width="2" height="2" fill="#d0d8d0"/><rect x="3" y="7" width="2" height="2" fill="#b8d0d0"/><rect x="4" y="7" width="2" height="2" fill="#a8c8d0"/><rect x="5" y="7" width="2" height="2" fill="#80c0d0"/><rect x="6" y="7" width="2" height="2" fill="#38a8d0"/><rect x="7" y="7" width="2" height="2" fill="#38a0c8"/><rect x="8" y="7" width="2" height="2" fill="#3898d0"/><rect x="9" y="7" width="2" height="2" fill="#f0e080"/><rect x="10" y="7" width="2" height="2" fill="#e0d888"/><rect x="11" y="7" width="2" height="2" fill="#d8d888"/><rect x="12" y="7" width="2" height="2" fill="#c0d090"/><rect x="13" y="7" width="2" height="2" fill="#a8c890"/><rect x="14" y="7" width="2" height="2" fill="#88c090"/><rect x="15" y="7" width="2" height="2" fill="#40a890"/><rect x="16" y="7" width="2" height="2" fill="#30a090"/><rect x="17" y="7" width="2" height="2" fill="#30a090"/><rect x="18" y="7" width="2" height="2" fill="#f0c800"/><rect x="19" y="7" width="2" height="2" fill="#e8c800"/><rect x="20" y="7" width="2" height="2" fill="#d8c808"/><rect x="21" y="7" width="2" height="2" fill="#c0c020"/><rect x="22" y="7" width="2" height="2" fill="#a0c028"/><rect x="23" y="7" width="2" height="2" fill="#88b830"/><rect x="24" y="7" width="2" height="2" fill="#60b038"/><rect x="25" y="7" width="2" height="2" fill="#30a048"/><rect x="26" y="7" width="2" height="2" fill="#309048"/><rect x="27" y="7" width="2" height="2" fill="#a48150"/><rect x="28" y="7" width="2" height="2" fill="#95794f"/><rect x="29" y="7" width="2" height="2" fill="#87724e"/><rect x="30" y="7" width="2" height="2" fill="#307060"/><rect x="31" y="7" width="2" height="2" fill="#107060"/><rect x="32" y="7" width="2" height="2" fill="#866a47"/><rect x="33" y="7" width="2" height="2" fill="#786346"/><rect x="34" y="7" width="2" height="2" fill="#695b46"/><rect x="35" y="7" width="2" height="2" fill="#306050"/><rect x="36" y="7" width="2" height="2" fill="#105850"/><rect x="37" y="7" width="2" height="2" fill="#586868"/><rect x="38" y="7" width="2" height="2" fill="#506870"/><rect x="39" y="7" width="2" height="2" fill="#306070"/><rect x="40" y="7" width="2" height="2" fill="#106078"/><rect x="41" y="7" width="2" height="2" fill="#606830"/><rect x="42" y="7" width="2" height="2" fill="#506030"/><rect x="43" y="7" width="2" height="2" fill="#305030"/><rect x="44" y="7" width="2" height="2" fill="#105030"/><rect x="45" y="7" width="2" height="2" fill="#ecd8c0"/><rect x="46" y="7" width="2" height="2" fill="#d0a8d0"/><rect x="47" y="7" width="2" height="2" fill="#c06070"/><rect x="48" y="7" width="2" height="2" fill="#48a0d0"/><rect x="0" y="8" width="2" height="2" fill="#f0f0d0"/><rect x="1" y="8" width="2" height="2" fill="#e0e8d0"/><rect x="2" y="8" width="2" height="2" fill="#c8e0d8"/><rect x="3" y="8" width="2" height="2" fill="#b0d8d8"/><rect x="4" y="8" width="2" height="2" fill="#98d0d8"/><rect x="5" y="8" width="2" height="2" fill="#60b8d8"/><rect x="6" y="8" width="2" height="2" fill="#40a8d8"/><rect x="7" y="8" width="2" height="2" fill="#40a0d8"/><rect x="8" y="8" width="2" height="2" fill="#3898d0"/><rect x="9" y="8" width="2" height="2" fill="#f0e888"/><rect x="10" y="8" width="2" height="2" fill="#e0e090"/><rect x="11" y="8" width="2" height="2" fill="#c8d890"/><rect x="12" y="8" width="2" height="2" fill="#b0d090"/><rect x="13" y="8" width="2" height="2" fill="#a0c890"/><rect x="14" y="8" width="2" height="2" fill="#70b890"/><rect x="15" y="8" width="2" height="2" fill="#40a890"/><rect x="16" y="8" width="2" height="2" fill="#30a890"/><rect x="17" y="8" width="2" height="2" fill="#30a090"/><rect x="18" y="8" width="2" height="2" fill="#f0e000"/><rect x="19" y="8" width="2" height="2" fill="#e0d800"/><rect x="20" y="8" width="2" height="2" fill="#d0d800"/><rect x="21" y="8" width="2" height="2" fill="#b8d020"/><rect x="22" y="8" width="2" height="2" fill="#a0c830"/><rect x="23" y="8" width="2" height="2" fill="#80b840"/><rect x="24" y="8" width="2" height="2" fill="#50a840"/><rect x="25" y="8" width="2" height="2" fill="#30a048"/><rect x="26" y="8" width="2" height="2" fill="#309848"/><rect x="27" y="8" width="2" height="2" fill="#a5a054"/><rect x="28" y="8" width="2" height="2" fill="#949753"/><rect x="29" y="8" width="2" height="2" fill="#868b52"/><rect x="30" y="8" width="2" height="2" fill="#308060"/><rect x="31" y="8" width="2" height="2" fill="#107860"/><rect x="32" y="8" width="2" height="2" fill="#8a864b"/><rect x="33" y="8" width="2" height="2" fill="#7b7b4d"/><rect x="34" y="8" width="2" height="2" fill="#6c7249"/><rect x="35" y="8" width="2" height="2" fill="#307050"/><rect x="36" y="8" width="2" height="2" fill="#106850"/><rect x="37" y="8" width="2" height="2" fill="#906888"/><rect x="38" y="8" width="2" height="2" fill="#f0dc98"/><rect x="39" y="8" width="2" height="2" fill="#ece4f0"/><rect x="40" y="8" width="2" height="2" fill="#e8e4f4"/><rect x="41" y="8" width="2" height="2" fill="#282828"/><rect x="42" y="8" width="2" height="2" fill="#f8d818"/><rect x="43" y="8" width="2" height="2" fill="#e02880"/><rect x="44" y="8" width="2" height="2" fill="#38a0e0"/><rect x="45" y="8" width="2" height="2" fill="#ecd0a0"/><rect x="46" y="8" width="2" height="2" fill="#d0a0c0"/><rect x="47" y="8" width="2" height="2" fill="#c05848"/><rect x="48" y="8" width="2" height="2" fill="#40a0c0"/><rect x="0" y="9" width="2" height="2" fill="#e02078"/><rect x="1" y="9" width="2" height="2" fill="#d82078"/><rect x="2" y="9" width="2" height="2" fill="#d02078"/><rect x="3" y="9" width="2" height="2" fill="#c02080"/><rect x="4" y="9" width="2" height="2" fill="#b02080"/><rect x="5" y="9" width="2" height="2" fill="#a02880"/><rect x="6" y="9" width="2" height="2" fill="#803088"/><rect x="7" y="9" width="2" height="2" fill="#583888"/><rect x="8" y="9" width="2" height="2" fill="#283c90"/><rect x="9" y="9" width="2" height="2" fill="#e01c58"/><rect x="10" y="9" width="2" height="2" fill="#d81c58"/><rect x="11" y="9" width="2" height="2" fill="#d01c60"/><rect x="12" y="9" width="2" height="2" fill="#c01c60"/><rect x="13" y="9" width="2" height="2" fill="#b02068"/><rect x="14" y="9" width="2" height="2" fill="#982868"/><rect x="15" y="9" width="2" height="2" fill="#803070"/><rect x="16" y="9" width="2" height="2" fill="#583870"/><rect x="17" y="9" width="2" height="2" fill="#303c78"/><rect x="18" y="9" width="2" height="2" fill="#e01838"/><rect x="19" y="9" width="2" height="2" fill="#d81c38"/><rect x="20" y="9" width="2" height="2" fill="#d01c38"/><rect x="21" y="9" width="2" height="2" fill="#c02040"/><rect x="22" y="9" width="2" height="2" fill="#b02840"/><rect x="23" y="9" width="2" height="2" fill="#983040"/><rect x="24" y="9" width="2" height="2" fill="#803040"/><rect x="25" y="9" width="2" height="2" fill="#583840"/><rect x="26" y="9" width="2" height="2" fill="#303848"/><rect x="27" y="9" width="2" height="2" fill="#aab156"/><rect x="28" y="9" width="2" height="2" fill="#95a955"/><rect x="29" y="9" width="2" height="2" fill="#879a53"/><rect x="30" y="9" width="2" height="2" fill="#309060"/><rect x="31" y="9" width="2" height="2" fill="#108060"/><rect x="32" y="9" width="2" height="2" fill="#949b4d"/><rect x="33" y="9" width="2" height="2" fill="#868d52"/><rect x="34" y="9" width="2" height="2" fill="#78854a"/><rect x="35" y="9" width="2" height="2" fill="#208050"/><rect x="36" y="9" width="2" height="2" fill="#107050"/><rect x="37" y="9" width="2" height="2" fill="#706898"/><rect x="38" y="9" width="2" height="2" fill="#ecdc98"/><rect x="39" y="9" width="2" height="2" fill="#eceaf4"/><rect x="40" y="9" width="2" height="2" fill="#88c4e8"/><rect x="41" y="9" width="2" height="2" fill="#2f2f2f"/><rect x="42" y="9" width="2" height="2" fill="#f8d818"/><rect x="43" y="9" width="2" height="2" fill="#e02d83"/><rect x="44" y="9" width="2" height="2" fill="#38a0e0"/><rect x="45" y="9" width="2" height="2" fill="#e8c858"/><rect x="46" y="9" width="2" height="2" fill="#d8a0b0"/><rect x="47" y="9" width="2" height="2" fill="#90c0e0"/><rect x="48" y="9" width="2" height="2" fill="#40a0a0"/><rect x="0" y="10" width="2" height="2" fill="#e04888"/><rect x="1" y="10" width="2" height="2" fill="#d84888"/><rect x="2" y="10" width="2" height="2" fill="#d04888"/><rect x="3" y="10" width="2" height="2" fill="#c04888"/><rect x="4" y="10" width="2" height="2" fill="#b04890"/><rect x="5" y="10" width="2" height="2" fill="#984890"/><rect x="6" y="10" width="2" height="2" fill="#805090"/><rect x="7" y="10" width="2" height="2" fill="#504c98"/><rect x="8" y="10" width="2" height="2" fill="#284c98"/><rect x="9" y="10" width="2" height="2" fill="#e04868"/><rect x="10" y="10" width="2" height="2" fill="#d84868"/><rect x="11" y="10" width="2" height="2" fill="#d04868"/><rect x="12" y="10" width="2" height="2" fill="#c04870"/><rect x="13" y="10" width="2" height="2" fill="#b04870"/><rect x="14" y="10" width="2" height="2" fill="#984878"/><rect x="15" y="10" width="2" height="2" fill="#804878"/><rect x="16" y="10" width="2" height="2" fill="#584880"/><rect x="17" y="10" width="2" height="2" fill="#284c80"/><rect x="18" y="10" width="2" height="2" fill="#e04838"/><rect x="19" y="10" width="2" height="2" fill="#d84838"/><rect x="20" y="10" width="2" height="2" fill="#d04838"/><rect x="21" y="10" width="2" height="2" fill="#c04838"/><rect x="22" y="10" width="2" height="2" fill="#b04840"/><rect x="23" y="10" width="2" height="2" fill="#984840"/><rect x="24" y="10" width="2" height="2" fill="#784840"/><rect x="25" y="10" width="2" height="2" fill="#504848"/><rect x="26" y="10" width="2" height="2" fill="#284850"/><rect x="27" y="10" width="2" height="2" fill="#af174c"/><rect x="28" y="10" width="2" height="2" fill="#a0174c"/><rect x="29" y="10" width="2" height="2" fill="#901e4c"/><rect x="30" y="10" width="2" height="2" fill="#503050"/><rect x="31" y="10" width="2" height="2" fill="#283058"/><rect x="32" y="10" width="2" height="2" fill="#98173d"/><rect x="33" y="10" width="2" height="2" fill="#89173d"/><rect x="34" y="10" width="2" height="2" fill="#811e3d"/><rect x="35" y="10" width="2" height="2" fill="#482840"/><rect x="36" y="10" width="2" height="2" fill="#282848"/><rect x="37" y="10" width="2" height="2" fill="#a09870"/><rect x="38" y="10" width="2" height="2" fill="#90c0a0"/><rect x="39" y="10" width="2" height="2" fill="#88c0e8"/><rect x="40" y="10" width="2" height="2" fill="#e898c8"/><rect x="41" y="10" width="2" height="2" fill="#363636"/><rect x="42" y="10" width="2" height="2" fill="#f8d818"/><rect x="43" y="10" width="2" height="2" fill="#e03287"/><rect x="44" y="10" width="2" height="2" fill="#38a0e0"/><rect x="45" y="10" width="2" height="2" fill="#d8c0e0"/><rect x="46" y="10" width="2" height="2" fill="#d09890"/><rect x="47" y="10" width="2" height="2" fill="#88c0d8"/><rect x="48" y="10" width="2" height="2" fill="#40a060"/><rect x="0" y="11" width="2" height="2" fill="#e06090"/><rect x="1" y="11" width="2" height="2" fill="#d86090"/><rect x="2" y="11" width="2" height="2" fill="#d06090"/><rect x="3" y="11" width="2" height="2" fill="#c06098"/><rect x="4" y="11" width="2" height="2" fill="#b06098"/><rect x="5" y="11" width="2" height="2" fill="#9060a0"/><rect x="6" y="11" width="2" height="2" fill="#7060a0"/><rect x="7" y="11" width="2" height="2" fill="#4060a0"/><rect x="8" y="11" width="2" height="2" fill="#2858a0"/><rect x="9" y="11" width="2" height="2" fill="#e06070"/><rect x="10" y="11" width="2" height="2" fill="#d86070"/><rect x="11" y="11" width="2" height="2" fill="#d06070"/><rect x="12" y="11" width="2" height="2" fill="#c06078"/><rect x="13" y="11" width="2" height="2" fill="#b06078"/><rect x="14" y="11" width="2" height="2" fill="#986080"/><rect x="15" y="11" width="2" height="2" fill="#786080"/><rect x="16" y="11" width="2" height="2" fill="#486080"/><rect x="17" y="11" width="2" height="2" fill="#205888"/><rect x="18" y="11" width="2" height="2" fill="#e05830"/><rect x="19" y="11" width="2" height="2" fill="#d85830"/><rect x="20" y="11" width="2" height="2" fill="#d05830"/><rect x="21" y="11" width="2" height="2" fill="#c05838"/><rect x="22" y="11" width="2" height="2" fill="#b05838"/><rect x="23" y="11" width="2" height="2" fill="#985838"/><rect x="24" y="11" width="2" height="2" fill="#785840"/><rect x="25" y="11" width="2" height="2" fill="#505848"/><rect x="26" y="11" width="2" height="2" fill="#205850"/><rect x="27" y="11" width="2" height="2" fill="#a75463"/><rect x="28" y="11" width="2" height="2" fill="#995562"/><rect x="29" y="11" width="2" height="2" fill="#8a535e"/><rect x="30" y="11" width="2" height="2" fill="#485068"/><rect x="31" y="11" width="2" height="2" fill="#204868"/><rect x="32" y="11" width="2" height="2" fill="#8b4554"/><rect x="33" y="11" width="2" height="2" fill="#7c4254"/><rect x="34" y="11" width="2" height="2" fill="#704554"/><rect x="35" y="11" width="2" height="2" fill="#404058"/><rect x="36" y="11" width="2" height="2" fill="#204058"/><rect x="37" y="11" width="2" height="2" fill="#a09870"/><rect x="38" y="11" width="2" height="2" fill="#f09080"/><rect x="39" y="11" width="2" height="2" fill="#e898c8"/><rect x="40" y="11" width="2" height="2" fill="#f0f0f8"/><rect x="41" y="11" width="2" height="2" fill="#3d3d3d"/><rect x="42" y="11" width="2" height="2" fill="#f8d818"/><rect x="43" y="11" width="2" height="2" fill="#e0378a"/><rect x="44" y="11" width="2" height="2" fill="#38a0e0"/><rect x="45" y="11" width="2" height="2" fill="#e0c8d0"/><rect x="46" y="11" width="2" height="2" fill="#d09048"/><rect x="47" y="11" width="2" height="2" fill="#90c0c0"/><rect x="48" y="11" width="2" height="2" fill="#3898d0"/><rect x="0" y="12" width="2" height="2" fill="#e890b0"/><rect x="1" y="12" width="2" height="2" fill="#d888b0"/><rect x="2" y="12" width="2" height="2" fill="#d088b0"/><rect x="3" y="12" width="2" height="2" fill="#c088b8"/><rect x="4" y="12" width="2" height="2" fill="#b088b8"/><rect x="5" y="12" width="2" height="2" fill="#9088b8"/><rect x="6" y="12" width="2" height="2" fill="#7088c0"/><rect x="7" y="12" width="2" height="2" fill="#3078b8"/><rect x="8" y="12" width="2" height="2" fill="#3070b8"/><rect x="9" y="12" width="2" height="2" fill="#e88880"/><rect x="10" y="12" width="2" height="2" fill="#e08880"/><rect x="11" y="12" width="2" height="2" fill="#d08880"/><rect x="12" y="12" width="2" height="2" fill="#c08080"/><rect x="13" y="12" width="2" height="2" fill="#b08088"/><rect x="14" y="12" width="2" height="2" fill="#908088"/><rect x="15" y="12" width="2" height="2" fill="#708088"/><rect x="16" y="12" width="2" height="2" fill="#307890"/><rect x="17" y="12" width="2" height="2" fill="#287890"/><rect x="18" y="12" width="2" height="2" fill="#e88830"/><rect x="19" y="12" width="2" height="2" fill="#e08838"/><rect x="20" y="12" width="2" height="2" fill="#d08838"/><rect x="21" y="12" width="2" height="2" fill="#c08040"/><rect x="22" y="12" width="2" height="2" fill="#b08040"/><rect x="23" y="12" width="2" height="2" fill="#907840"/><rect x="24" y="12" width="2" height="2" fill="#707040"/><rect x="25" y="12" width="2" height="2" fill="#407048"/><rect x="26" y="12" width="2" height="2" fill="#207050"/><rect x="27" y="12" width="2" height="2" fill="#a58274"/><rect x="28" y="12" width="2" height="2" fill="#968173"/><rect x="29" y="12" width="2" height="2" fill="#887a6c"/><rect x="30" y="12" width="2" height="2" fill="#386878"/><rect x="31" y="12" width="2" height="2" fill="#186878"/><rect x="32" y="12" width="2" height="2" fill="#876b64"/><rect x="33" y="12" width="2" height="2" fill="#786363"/><rect x="34" y="12" width="2" height="2" fill="#6a6363"/><rect x="35" y="12" width="2" height="2" fill="#386068"/><rect x="36" y="12" width="2" height="2" fill="#105868"/><rect x="37" y="12" width="2" height="2" fill="#a09870"/><rect x="38" y="12" width="2" height="2" fill="#f09080"/><rect x="39" y="12" width="2" height="2" fill="#e098d0"/><rect x="40" y="12" width="2" height="2" fill="#88c8e8"/><rect x="41" y="12" width="2" height="2" fill="#444444"/><rect x="42" y="12" width="2" height="2" fill="#f8d818"/><rect x="43" y="12" width="2" height="2" fill="#e03d8e"/><rect x="44" y="12" width="2" height="2" fill="#38a0e0"/><rect x="45" y="12" width="2" height="2" fill="#e8c0b8"/><rect x="46" y="12" width="2" height="2" fill="#c058a0"/><rect x="47" y="12" width="2" height="2" fill="#98c0b0"/><rect x="48" y="12" width="2" height="2" fill="#3890c8"/><rect x="0" y="13" width="2" height="2" fill="#e8a8c0"/><rect x="1" y="13" width="2" height="2" fill="#d8a8c0"/><rect x="2" y="13" width="2" height="2" fill="#d0a8c0"/><rect x="3" y="13" width="2" height="2" fill="#c0a8c8"/><rect x="4" y="13" width="2" height="2" fill="#b0a8c8"/><rect x="5" y="13" width="2" height="2" fill="#90a0c8"/><rect x="6" y="13" width="2" height="2" fill="#6898c8"/><rect x="7" y="13" width="2" height="2" fill="#3088c8"/><rect x="8" y="13" width="2" height="2" fill="#3080c8"/><rect x="9" y="13" width="2" height="2" fill="#f0a890"/><rect x="10" y="13" width="2" height="2" fill="#e0a090"/><rect x="11" y="13" width="2" height="2" fill="#d0a090"/><rect x="12" y="13" width="2" height="2" fill="#c0a090"/><rect x="13" y="13" width="2" height="2" fill="#b09890"/><rect x="14" y="13" width="2" height="2" fill="#909090"/><rect x="15" y="13" width="2" height="2" fill="#709098"/><rect x="16" y="13" width="2" height="2" fill="#308898"/><rect x="17" y="13" width="2" height="2" fill="#288898"/><rect x="18" y="13" width="2" height="2" fill="#f0a030"/><rect x="19" y="13" width="2" height="2" fill="#e09830"/><rect x="20" y="13" width="2" height="2" fill="#d09838"/><rect x="21" y="13" width="2" height="2" fill="#c09040"/><rect x="22" y="13" width="2" height="2" fill="#b09040"/><rect x="23" y="13" width="2" height="2" fill="#909040"/><rect x="24" y="13" width="2" height="2" fill="#708840"/><rect x="25" y="13" width="2" height="2" fill="#308048"/><rect x="26" y="13" width="2" height="2" fill="#208050"/><rect x="27" y="13" width="2" height="2" fill="#a7a180"/><rect x="28" y="13" width="2" height="2" fill="#969e7f"/><rect x="29" y="13" width="2" height="2" fill="#889276"/><rect x="30" y="13" width="2" height="2" fill="#308070"/><rect x="31" y="13" width="2" height="2" fill="#107870"/><rect x="32" y="13" width="2" height="2" fill="#8b886d"/><rect x="33" y="13" width="2" height="2" fill="#7d7d6c"/><rect x="34" y="13" width="2" height="2" fill="#6e796b"/><rect x="35" y="13" width="2" height="2" fill="#307070"/><rect x="36" y="13" width="2" height="2" fill="#107070"/><rect x="37" y="13" width="2" height="2" fill="#508878"/><rect x="38" y="13" width="2" height="2" fill="#a08898"/><rect x="39" y="13" width="2" height="2" fill="#8888c8"/><rect x="40" y="13" width="2" height="2" fill="#f0f0f8"/><rect x="41" y="13" width="2" height="2" fill="#4b4b4b"/><rect x="42" y="13" width="2" height="2" fill="#f8d818"/><rect x="43" y="13" width="2" height="2" fill="#e04291"/><rect x="44" y="13" width="2" height="2" fill="#38a0e0"/><rect x="45" y="13" width="2" height="2" fill="#e8c898"/><rect x="46" y="13" width="2" height="2" fill="#c05898"/><rect x="47" y="13" width="2" height="2" fill="#a0c060"/><rect x="48" y="13" width="2" height="2" fill="#3890c8"/><rect x="0" y="14" width="2" height="2" fill="#f0c0d0"/><rect x="1" y="14" width="2" height="2" fill="#e0c0d0"/><rect x="2" y="14" width="2" height="2" fill="#d0c0d8"/><rect x="3" y="14" width="2" height="2" fill="#c0b8d8"/><rect x="4" y="14" width="2" height="2" fill="#b0b8d8"/><rect x="5" y="14" width="2" height="2" fill="#90b0d8"/><rect x="6" y="14" width="2" height="2" fill="#60a0d8"/><rect x="7" y="14" width="2" height="2" fill="#3890d0"/><rect x="8" y="14" width="2" height="2" fill="#3888d0"/><rect x="9" y="14" width="2" height="2" fill="#f0c0a0"/><rect x="10" y="14" width="2" height="2" fill="#e0b8a0"/><rect x="11" y="14" width="2" height="2" fill="#d0b8a0"/><rect x="12" y="14" width="2" height="2" fill="#c0b0a0"/><rect x="13" y="14" width="2" height="2" fill="#b0b0a0"/><rect x="14" y="14" width="2" height="2" fill="#90a8a0"/><rect x="15" y="14" width="2" height="2" fill="#6098a0"/><rect x="16" y="14" width="2" height="2" fill="#2890a0"/><rect x="17" y="14" width="2" height="2" fill="#2888a0"/><rect x="18" y="14" width="2" height="2" fill="#f0b830"/><rect x="19" y="14" width="2" height="2" fill="#e8b838"/><rect x="20" y="14" width="2" height="2" fill="#d8b040"/><rect x="21" y="14" width="2" height="2" fill="#c0a840"/><rect x="22" y="14" width="2" height="2" fill="#b0a840"/><rect x="23" y="14" width="2" height="2" fill="#90a040"/><rect x="24" y="14" width="2" height="2" fill="#709848"/><rect x="25" y="14" width="2" height="2" fill="#309050"/><rect x="26" y="14" width="2" height="2" fill="#289058"/><rect x="27" y="14" width="2" height="2" fill="#adb386"/><rect x="28" y="14" width="2" height="2" fill="#98ab85"/><rect x="29" y="14" width="2" height="2" fill="#899d7c"/><rect x="30" y="14" width="2" height="2" fill="#309078"/><rect x="31" y="14" width="2" height="2" fill="#108078"/><rect x="32" y="14" width="2" height="2" fill="#969d6f"/><rect x="33" y="14" width="2" height="2" fill="#888e6e"/><rect x="34" y="14" width="2" height="2" fill="#7a876d"/><rect x="35" y="14" width="2" height="2" fill="#308078"/><rect x="36" y="14" width="2" height="2" fill="#107878"/><rect x="37" y="14" width="2" height="2" fill="#b06858"/><rect x="38" y="14" width="2" height="2" fill="#a0a8c0"/><rect x="39" y="14" width="2" height="2" fill="#f0eef8"/><rect x="40" y="14" width="2" height="2" fill="#f0eef8"/><rect x="41" y="14" width="2" height="2" fill="#525252"/><rect x="42" y="14" width="2" height="2" fill="#f8d818"/><rect x="43" y="14" width="2" height="2" fill="#e04795"/><rect x="44" y="14" width="2" height="2" fill="#38a0e0"/><rect x="45" y="14" width="2" height="2" fill="#e8c050"/><rect x="46" y="14" width="2" height="2" fill="#c05888"/><rect x="47" y="14" width="2" height="2" fill="#90b8e0"/><rect x="48" y="14" width="2" height="2" fill="#389088"/><rect x="0" y="15" width="2" height="2" fill="#f0d0d8"/><rect x="1" y="15" width="2" height="2" fill="#e0c8d8"/><rect x="2" y="15" width="2" height="2" fill="#d0c8d8"/><rect x="3" y="15" width="2" height="2" fill="#c0c0d8"/><rect x="4" y="15" width="2" height="2" fill="#b0c0d8"/><rect x="5" y="15" width="2" height="2" fill="#90b8d8"/><rect x="6" y="15" width="2" height="2" fill="#60a8d8"/><rect x="7" y="15" width="2" height="2" fill="#3898d0"/><rect x="8" y="15" width="2" height="2" fill="#3890d0"/><rect x="9" y="15" width="2" height="2" fill="#f0c0a8"/><rect x="10" y="15" width="2" height="2" fill="#e0b8a8"/><rect x="11" y="15" width="2" height="2" fill="#d0b8a8"/><rect x="12" y="15" width="2" height="2" fill="#c0b8a8"/><rect x="13" y="15" width="2" height="2" fill="#b0b0a8"/><rect x="14" y="15" width="2" height="2" fill="#90a8a8"/><rect x="15" y="15" width="2" height="2" fill="#60a0a8"/><rect x="16" y="15" width="2" height="2" fill="#2898a8"/><rect x="17" y="15" width="2" height="2" fill="#2890a8"/><rect x="18" y="15" width="2" height="2" fill="#f0c030"/><rect x="19" y="15" width="2" height="2" fill="#e0c038"/><rect x="20" y="15" width="2" height="2" fill="#d0b840"/><rect x="21" y="15" width="2" height="2" fill="#c0b040"/><rect x="22" y="15" width="2" height="2" fill="#b0a840"/><rect x="23" y="15" width="2" height="2" fill="#90a040"/><rect x="24" y="15" width="2" height="2" fill="#709848"/><rect x="25" y="15" width="2" height="2" fill="#309850"/><rect x="26" y="15" width="2" height="2" fill="#289858"/><rect x="27" y="15" width="2" height="2" fill="#b81858"/><rect x="28" y="15" width="2" height="2" fill="#a01860"/><rect x="29" y="15" width="2" height="2" fill="#902060"/><rect x="30" y="15" width="2" height="2" fill="#483060"/><rect x="31" y="15" width="2" height="2" fill="#283068"/><rect x="32" y="15" width="2" height="2" fill="#a01848"/><rect x="33" y="15" width="2" height="2" fill="#901850"/><rect x="34" y="15" width="2" height="2" fill="#882050"/><rect x="35" y="15" width="2" height="2" fill="#482858"/><rect x="36" y="15" width="2" height="2" fill="#282860"/><rect x="37" y="15" width="2" height="2" fill="#f0f0f8"/><rect x="38" y="15" width="2" height="2" fill="#a0a8c0"/><rect x="39" y="15" width="2" height="2" fill="#f0f0f8"/><rect x="40" y="15" width="2" height="2" fill="#88c0e0"/><rect x="41" y="15" width="2" height="2" fill="#595959"/><rect x="42" y="15" width="2" height="2" fill="#f8d818"/><rect x="43" y="15" width="2" height="2" fill="#e04c98"/><rect x="44" y="15" width="2" height="2" fill="#38a0e0"/><rect x="45" y="15" width="2" height="2" fill="#d8b0d0"/><rect x="46" y="15" width="2" height="2" fill="#c06878"/><rect x="47" y="15" width="2" height="2" fill="#90b8e0"/><rect x="48" y="15" width="2" height="2" fill="#389080"/></svg><svg class="a" style="left:249px;top:329px" width="15" height="15" viewBox="0 0 15 15"><rect x="1.7" y="1.2" width="11.5" height="11.5" fill="none" stroke="#2a2a2a" stroke-width="1"/><path d="M2.2 12.2 L12.7 1.7" stroke="#2a2a2a" stroke-width="1"/></svg><div class="a" style="left:632.6px;top:242.4px;width:8.2px;height:189px;background:#f8f8f8"></div><div class="a" style="left:634.9px;top:244px;width:4.3px;height:81px;border-radius:2.2px;background:#bcbcbc"></div></div></body></html>
